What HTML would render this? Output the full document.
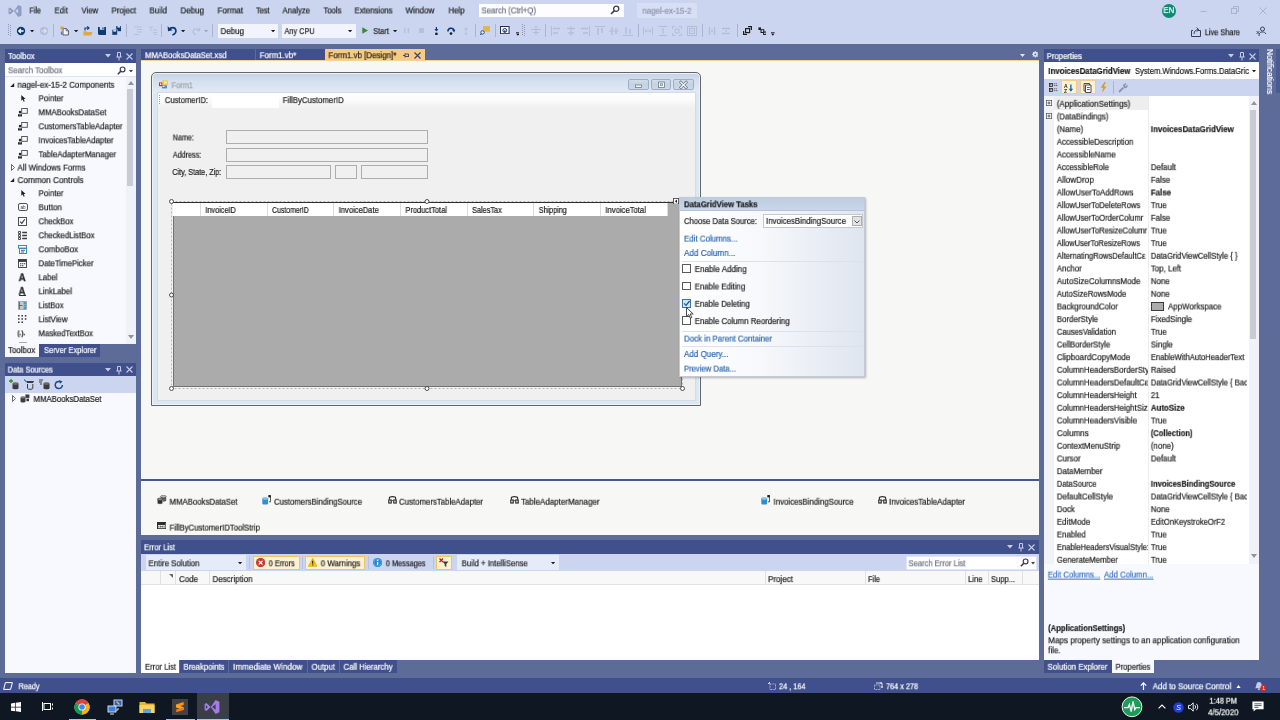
<!DOCTYPE html>
<html lang="en"><head><meta charset="utf-8"><title>nagel-ex-15-2 - Microsoft Visual Studio</title>
<style>
html,body{margin:0;padding:0;}
body{width:1280px;height:720px;overflow:hidden;position:relative;background:#5d6b99;font-family:"Liberation Sans",sans-serif;font-size:8.6px;color:#1e1e1e;}
.b{position:absolute;box-sizing:border-box;overflow:hidden;}
.t{position:absolute;white-space:nowrap;line-height:12px;height:12px;transform-origin:0 50%;will-change:transform;-webkit-text-stroke:0.22px;}
svg{overflow:visible;}
svg text{will-change:transform;}
</style></head><body>
<div class="b" style="left:0px;top:0px;width:1280px;height:44px;background:#ccd5f0;"></div>
<svg class="b" style="left:8px;top:4px;" width="14" height="14" viewBox="0 0 14 14"><path d="M0.5 4.5 L2 3.6 L6 7 L10.2 1 L13.5 2.5 V11.5 L10.2 13 L6 7 L2 10.4 L0.5 9.5 Z M10.2 4.6 L7.2 7 L10.2 9.4 Z M1.6 5.6 V8.4 L3.2 7 Z" fill="#8e9cc2" fill-rule="evenodd"/></svg>
<span class="t" style="left:29px;top:4px;transform:translate(0.50px,0.40px) scaleX(0.823);">File</span>
<span class="t" style="left:54px;top:4px;transform:translate(0.50px,0.40px) scaleX(0.905);">Edit</span>
<span class="t" style="left:81px;top:4px;transform:translate(0.50px,0.40px) scaleX(0.898);">View</span>
<span class="t" style="left:111px;top:4px;transform:translate(0.50px,0.40px) scaleX(0.920);">Project</span>
<span class="t" style="left:149px;top:4px;transform:translate(0.50px,0.40px) scaleX(0.916);">Build</span>
<span class="t" style="left:180px;top:4px;transform:translate(0.50px,0.40px) scaleX(0.928);">Debug</span>
<span class="t" style="left:217px;top:4px;transform:translate(0.50px,0.40px) scaleX(0.937);">Format</span>
<span class="t" style="left:256px;top:4px;transform:translate(0.00px,0.40px) scaleX(0.856);">Test</span>
<span class="t" style="left:282px;top:4px;transform:translate(0.50px,0.40px) scaleX(0.899);">Analyze</span>
<span class="t" style="left:323px;top:4px;transform:translate(0.50px,0.40px) scaleX(0.897);">Tools</span>
<span class="t" style="left:354px;top:4px;transform:translate(0.50px,0.40px) scaleX(0.904);">Extensions</span>
<span class="t" style="left:405px;top:4px;transform:translate(0.50px,0.40px) scaleX(0.948);">Window</span>
<span class="t" style="left:448px;top:4px;transform:translate(0.50px,0.40px) scaleX(0.905);">Help</span>
<div class="b" style="left:478.8px;top:3.8px;width:145.6px;height:13.4px;background:#fdfdff;"></div>
<span class="t" style="left:481px;top:4px;color:#6a6f80;transform:translate(0.50px,0.40px) scaleX(0.902);">Search (Ctrl+Q)</span>
<svg class="b" style="left:610px;top:5px;" width="10" height="10" viewBox="0 0 10 10"><circle cx="6.2" cy="3.8" r="2.6" fill="none" stroke="#3a3f55" stroke-width="1.3"/><path d="M4.4 5.6 L1 9" stroke="#3a3f55" stroke-width="1.6"/></svg>
<div class="b" style="left:637px;top:3.3px;width:60.3px;height:14.7px;background:#d8dff4;"></div>
<span class="t" style="left:642px;top:4px;color:#8b93b0;transform:translate(0.40px,0.70px) scaleX(0.924);">nagel-ex-15-2</span>
<div class="b" style="left:1161.8px;top:3.7px;width:14px;height:14px;border-radius:7px;background:#0f8a72;"></div>
<span class="t" style="left:1163px;top:5px;color:#ffffff;font-size:8.2px;transform:translate(0.40px,0.10px) scaleX(0.949);">EN</span>
<svg class="b" style="left:1195px;top:1px;" width="85" height="20" viewBox="0 0 85 20"><path d="M5.5 10.5 H11.5" stroke="#aab3cf" stroke-width="1"/><rect x="36.5" y="7.5" width="5" height="5" fill="none" stroke="#aab3cf"/><path d="M38.5 7.5 V5.5 H43.5 V10.5 H41.5" fill="none" stroke="#aab3cf"/><path d="M64.5 6.5 L71.5 13.5 M71.5 6.5 L64.5 13.5" stroke="#aab3cf" stroke-width="1"/></svg>
<svg class="b" style="left:8px;top:24px;" width="3" height="12" viewBox="0 0 3 12"><rect x="0" y="0" width="1" height="1" fill="#8e98b8"/><rect x="2" y="1" width="1" height="1" fill="#8e98b8"/><rect x="0" y="2" width="1" height="1" fill="#8e98b8"/><rect x="2" y="3" width="1" height="1" fill="#8e98b8"/><rect x="0" y="4" width="1" height="1" fill="#8e98b8"/><rect x="2" y="5" width="1" height="1" fill="#8e98b8"/><rect x="0" y="6" width="1" height="1" fill="#8e98b8"/><rect x="2" y="7" width="1" height="1" fill="#8e98b8"/><rect x="0" y="8" width="1" height="1" fill="#8e98b8"/><rect x="2" y="9" width="1" height="1" fill="#8e98b8"/><rect x="0" y="10" width="1" height="1" fill="#8e98b8"/><rect x="2" y="11" width="1" height="1" fill="#8e98b8"/></svg>
<svg class="b" style="left:16px;top:26px;" width="10" height="10" viewBox="0 0 10 10"><circle cx="5" cy="5" r="4.2" fill="#0e3a73"/><path d="M7.6 5 H3 M4.9 2.9 L2.8 5 L4.9 7.1" stroke="#fff" stroke-width="1.3" fill="none"/></svg>
<svg class="b" style="left:30.4px;top:29.6px;" width="4.2" height="2.4" viewBox="0 0 4.2 2.4"><path d="M0 0 H4.2 L2.1 2.4 Z" fill="#1e1e1e"/></svg>
<svg class="b" style="left:39px;top:26px;" width="10" height="10" viewBox="0 0 10 10"><circle cx="5" cy="5" r="4.2" fill="#b5bdd6"/><path d="M2.4 5 H7 M5.1 2.9 L7.2 5 L5.1 7.1" stroke="#dfe4f4" stroke-width="1.2" fill="none"/></svg>
<div class="b" style="left:53px;top:24px;width:1px;height:13px;background:#a9b3d3;"></div>
<svg class="b" style="left:60px;top:26px;" width="9" height="9.5" viewBox="0 0 9 9.5"><path d="M3 2.6 H6.4 L8.4 4.6 V9 H3 Z" fill="#f4f6fc" stroke="#4a4e60" stroke-width="0.9"/><path d="M6.2 2.6 V4.8 H8.4" fill="none" stroke="#4a4e60" stroke-width="0.8"/><path d="M1.9 0 V3.8 M0 1.9 H3.8 M0.6 0.6 L3.2 3.2 M3.2 0.6 L0.6 3.2" stroke="#d8a21e" stroke-width="0.8"/><path d="M1.4 5.6 V8.2 H2.6" stroke="#4a4e60" stroke-width="0.8" fill="none"/></svg>
<svg class="b" style="left:74.4px;top:29.6px;" width="4.2" height="2.4" viewBox="0 0 4.2 2.4"><path d="M0 0 H4.2 L2.1 2.4 Z" fill="#1e1e1e"/></svg>
<svg class="b" style="left:82.5px;top:26px;" width="10" height="10" viewBox="0 0 10 10"><path d="M0.4 5.2 H3.2 L4 6 H9.4 L8.2 9.6 H0.4 Z" fill="#e0a93f"/><path d="M2 4.6 V2 H5.6 M4.2 0.4 L6 2 L4.2 3.6" stroke="#14407f" stroke-width="1.2" fill="none"/></svg>
<svg class="b" style="left:98px;top:26.8px;" width="8" height="8" viewBox="0 0 8 8"><path d="M0 0 H8 V8 H1 L0 7 Z" fill="#0e3a73"/><rect x="1.8" y="0" width="4.4" height="2.8" fill="#ccd5f0"/><rect x="4.4" y="0.4" width="1.1" height="1.9" fill="#0e3a73"/></svg>
<svg class="b" style="left:112px;top:26px;" width="9.4" height="9.2" viewBox="0 0 9.4 9.2"><path d="M4.2 0 H9.4 V5.2 H4.2 Z" fill="#0e3a73"/><rect x="5.4" y="0" width="2.8" height="1.6" fill="#ccd5f0"/><path d="M0 3.8 H5.4 V9.2 H0.8 L0 8.4 Z" fill="#0e3a73" stroke="#ccd5f0" stroke-width="0.6"/><rect x="1.3" y="4" width="2.8" height="1.7" fill="#ccd5f0"/></svg>
<div class="b" style="left:126px;top:24px;width:1px;height:13px;background:#a9b3d3;"></div>
<svg class="b" style="left:133px;top:26px;" width="10" height="9" viewBox="0 0 10 9"><path d="M1 1 H9 M4 3.5 H9 M4 6 H9 M1 8.5 H6" stroke="#b7bfd9" stroke-width="1"/></svg>
<svg class="b" style="left:148px;top:26px;" width="10" height="9" viewBox="0 0 10 9"><path d="M1 1 H5 M3 1 V5 M5 4 H9 M5 6.5 H9 M6 8.5 H9" stroke="#b7bfd9" stroke-width="1"/></svg>
<div class="b" style="left:161px;top:24px;width:1px;height:13px;background:#a9b3d3;"></div>
<svg class="b" style="left:167px;top:25px;" width="11" height="11" viewBox="0 0 11 11"><path d="M2.2 4.6 C4 2 8 2 8.8 5 C9.3 7.4 7.6 9.2 5.4 10" stroke="#0e3a73" stroke-width="1.7" fill="none"/><path d="M0.6 1.2 L1 6.2 L5.6 5.2 Z" fill="#0e3a73"/></svg>
<svg class="b" style="left:181.4px;top:29.6px;" width="4.2" height="2.4" viewBox="0 0 4.2 2.4"><path d="M0 0 H4.2 L2.1 2.4 Z" fill="#1e1e1e"/></svg>
<svg class="b" style="left:191px;top:26px;" width="10" height="10" viewBox="0 0 10 10"><path d="M8 4.2 C6.4 2 3 2 2.2 4.6 C1.8 6.6 3.2 8.2 5 8.8" stroke="#b7bfd9" stroke-width="1.4" fill="none"/><path d="M9.4 1.2 L9 5.6 L5 4.8 Z" fill="#b7bfd9"/></svg>
<svg class="b" style="left:204.4px;top:29.6px;" width="4.2" height="2.4" viewBox="0 0 4.2 2.4"><path d="M0 0 H4.2 L2.1 2.4 Z" fill="#9aa3c0"/></svg>
<div class="b" style="left:212px;top:24px;width:1px;height:13px;background:#a9b3d3;"></div>
<div class="b" style="left:218px;top:24.3px;width:59.5px;height:13.4px;background:#f1f4fc;"></div>
<span class="t" style="left:220px;top:25px;transform:translate(0.50px,0.10px) scaleX(0.928);">Debug</span>
<svg class="b" style="left:271.4px;top:29.6px;" width="4.2" height="2.4" viewBox="0 0 4.2 2.4"><path d="M0 0 H4.2 L2.1 2.4 Z" fill="#1e1e1e"/></svg>
<div class="b" style="left:282px;top:24.3px;width:73.5px;height:13.4px;background:#f1f4fc;"></div>
<span class="t" style="left:284px;top:25px;transform:translate(0.50px,0.10px) scaleX(0.849);">Any CPU</span>
<svg class="b" style="left:348.4px;top:29.6px;" width="4.2" height="2.4" viewBox="0 0 4.2 2.4"><path d="M0 0 H4.2 L2.1 2.4 Z" fill="#1e1e1e"/></svg>
<svg class="b" style="left:362.2px;top:27.2px;" width="6.2" height="7" viewBox="0 0 6.2 7"><path d="M0.3 0.2 L6 3.5 L0.3 6.8 Z" fill="#388a34"/></svg>
<span class="t" style="left:373px;top:25px;transform:translate(0.30px,0.10px) scaleX(0.854);">Start</span>
<svg class="b" style="left:393.4px;top:30px;" width="4.2" height="2.4" viewBox="0 0 4.2 2.4"><path d="M0 0 H4.2 L2.1 2.4 Z" fill="#1e1e1e"/></svg>
<svg class="b" style="left:404px;top:27.7px;" width="6" height="5.8" viewBox="0 0 6 5.8"><path d="M0.8 0 V5.8 M4.4 0 V5.8" stroke="#b7bfd9" stroke-width="1.4"/></svg>
<div class="b" style="left:418.6px;top:27.9px;width:5.6px;height:5.4px;background:#b7bfd9;"></div>
<svg class="b" style="left:433px;top:26.6px;" width="7" height="8.4" viewBox="0 0 7 8.4"><path d="M3.4 0 V3" stroke="#0e3a73" stroke-width="1.2"/><path d="M1.4 2 L3.4 4.4 L5.4 2 Z" fill="#0e3a73"/><circle cx="3.4" cy="6.9" r="1.35" fill="#1e1e1e"/></svg>
<svg class="b" style="left:446.5px;top:27px;" width="8.4" height="8" viewBox="0 0 8.4 8"><path d="M0.9 4.4 C0.9 0.6 6.4 0.4 6.9 3.4" stroke="#0e3a73" stroke-width="1.5" fill="none"/><path d="M4.8 2.6 L8.2 2.8 L7.2 5.6 Z" fill="#0e3a73"/><circle cx="4" cy="6.6" r="1.35" fill="#1e1e1e"/></svg>
<svg class="b" style="left:462.5px;top:26.8px;" width="6" height="8.2" viewBox="0 0 6 8.2"><path d="M3 1.6 V4.8" stroke="#b7bfd9" stroke-width="1.2"/><path d="M1 2.6 L3 0.2 L5 2.6 Z" fill="#b7bfd9"/><circle cx="3" cy="6.8" r="1.25" fill="#b7bfd9"/></svg>
<div class="b" style="left:475px;top:24px;width:1px;height:13px;background:#a9b3d3;"></div>
<svg class="b" style="left:480.3px;top:26px;" width="10.2" height="9" viewBox="0 0 10.2 9"><rect x="3" y="0" width="7.2" height="5.6" fill="#e6b355"/><circle cx="2.6" cy="6.4" r="1.7" fill="#e8edfa" stroke="#1a4b8c" stroke-width="0.9"/><path d="M1.5 7.6 L0.3 8.8" stroke="#1a4b8c" stroke-width="1.1"/></svg>
<div class="b" style="left:495px;top:24px;width:1px;height:13px;background:#a9b3d3;"></div>
<svg class="b" style="left:500.4px;top:26.3px;" width="9.6" height="8.2" viewBox="0 0 9.6 8.2"><rect x="0.5" y="0.5" width="8.6" height="7.2" fill="#f3f5fc" stroke="#2a2e40" stroke-width="1"/><circle cx="4.8" cy="4.4" r="1.9" fill="none" stroke="#0e3a73" stroke-width="1"/><rect x="4.1" y="4.4" width="1.4" height="1.9" fill="#0e3a73"/></svg>
<svg class="b" style="left:515.5px;top:32.4px;" width="3.6" height="3.8" viewBox="0 0 3.6 3.8"><path d="M0 0.4 H3.6" stroke="#1e1e1e" stroke-width="0.8"/><path d="M0 1.6 H3.6 L1.8 3.8 Z" fill="#1e1e1e"/></svg>
<svg class="b" style="left:522px;top:24px;" width="3" height="12" viewBox="0 0 3 12"><rect x="0" y="0" width="1" height="1" fill="#8e98b8"/><rect x="2" y="1" width="1" height="1" fill="#8e98b8"/><rect x="0" y="2" width="1" height="1" fill="#8e98b8"/><rect x="2" y="3" width="1" height="1" fill="#8e98b8"/><rect x="0" y="4" width="1" height="1" fill="#8e98b8"/><rect x="2" y="5" width="1" height="1" fill="#8e98b8"/><rect x="0" y="6" width="1" height="1" fill="#8e98b8"/><rect x="2" y="7" width="1" height="1" fill="#8e98b8"/><rect x="0" y="8" width="1" height="1" fill="#8e98b8"/><rect x="2" y="9" width="1" height="1" fill="#8e98b8"/><rect x="0" y="10" width="1" height="1" fill="#8e98b8"/><rect x="2" y="11" width="1" height="1" fill="#8e98b8"/></svg>
<svg class="b" style="left:531px;top:26px;" width="10" height="10" viewBox="0 0 10 10"><path d="M0 3.5 H10 M5 0 V9 M2 6.5 H8" stroke="#b4bcd6" stroke-width="1.2" fill="none"/></svg>
<div class="b" style="left:545px;top:24px;width:1px;height:13px;background:#a9b3d3;"></div>
<svg class="b" style="left:551px;top:26px;" width="10" height="10" viewBox="0 0 10 10"><path d="M0.5 0 V10" stroke="#b4bcd6"/><path d="M2 2.5 H9 M2 7 H7" stroke="#b4bcd6" stroke-width="1.4"/></svg>
<svg class="b" style="left:566px;top:26px;" width="10" height="10" viewBox="0 0 10 10"><path d="M5 0 V10" stroke="#b4bcd6"/><path d="M1 2.5 H9 M2 7 H8" stroke="#b4bcd6" stroke-width="1.4"/></svg>
<svg class="b" style="left:580px;top:26px;" width="10" height="10" viewBox="0 0 10 10"><path d="M9.5 0 V10" stroke="#b4bcd6"/><path d="M1 2.5 H8 M3 7 H8" stroke="#b4bcd6" stroke-width="1.4"/></svg>
<svg class="b" style="left:595px;top:26px;" width="10" height="10" viewBox="0 0 10 10"><path d="M0 0.5 H10" stroke="#b4bcd6"/><path d="M3 2 V9 M7 2 V7" stroke="#b4bcd6" stroke-width="1.4"/></svg>
<svg class="b" style="left:609px;top:26px;" width="10" height="10" viewBox="0 0 10 10"><path d="M0 5 H10" stroke="#b4bcd6"/><path d="M3 1 V9 M7 2 V8" stroke="#b4bcd6" stroke-width="1.4"/></svg>
<svg class="b" style="left:623px;top:26px;" width="10" height="10" viewBox="0 0 10 10"><path d="M0 9.5 H10" stroke="#b4bcd6"/><path d="M3 1 V8 M7 3 V8" stroke="#b4bcd6" stroke-width="1.4"/></svg>
<div class="b" style="left:638px;top:24px;width:1px;height:13px;background:#a9b3d3;"></div>
<svg class="b" style="left:643px;top:26px;" width="10" height="10" viewBox="0 0 10 10"><path d="M0.5 1 V9 M9.5 1 V9 M2 5 H8 M3.5 3.5 L2 5 L3.5 6.5 M6.5 3.5 L8 5 L6.5 6.5" stroke="#b4bcd6" fill="none"/></svg>
<svg class="b" style="left:658px;top:26px;" width="10" height="10" viewBox="0 0 10 10"><path d="M1 0.5 H9 M1 9.5 H9 M5 2 V8" stroke="#b4bcd6" stroke-width="1.2" fill="none"/></svg>
<svg class="b" style="left:672px;top:26px;" width="10" height="10" viewBox="0 0 10 10"><path d="M0.5 3 V0.5 H3 M7 0.5 H9.5 V3 M9.5 7 V9.5 H7 M3 9.5 H0.5 V7 M3 3 H7 V7 H3 Z" stroke="#b4bcd6" fill="none"/></svg>
<svg class="b" style="left:687px;top:26px;" width="10" height="10" viewBox="0 0 10 10"><rect x="0.5" y="0.5" width="9" height="9" fill="none" stroke="#b4bcd6"/><rect x="2.5" y="2.5" width="5" height="5" fill="none" stroke="#b4bcd6"/><path d="M4 5 H6" stroke="#b4bcd6"/></svg>
<div class="b" style="left:702px;top:24px;width:1px;height:13px;background:#a9b3d3;"></div>
<svg class="b" style="left:707px;top:26px;" width="10" height="10" viewBox="0 0 10 10"><path d="M2.5 1 V9 M7.5 1 V9 M4 5 H6" stroke="#b4bcd6" stroke-width="1.3"/></svg>
<svg class="b" style="left:721px;top:26px;" width="10" height="10" viewBox="0 0 10 10"><path d="M1 2.5 H9 M1 7.5 H9 M5 4 V6" stroke="#b4bcd6" stroke-width="1.3"/></svg>
<div class="b" style="left:736.6px;top:24px;width:1px;height:13px;background:#a9b3d3;"></div>
<svg class="b" style="left:743px;top:26.2px;" width="9" height="9" viewBox="0 0 9 9"><rect x="2.6" y="2.6" width="4" height="4" fill="#ccd5f0" stroke="#1e1e1e" stroke-width="1.2"/><path d="M0.6 5 V8.4 H4 M5 0.6 H8.4 V4" stroke="#1e1e1e" stroke-width="1.2" fill="none"/></svg>
<svg class="b" style="left:757.8px;top:27px;" width="8.6" height="8" viewBox="0 0 8.6 8"><rect x="0.4" y="0.4" width="2.6" height="2.6" fill="#1e1e1e"/><rect x="3" y="2.7" width="2.8" height="2.8" fill="none" stroke="#1e1e1e" stroke-width="1"/><rect x="5.6" y="5" width="2.6" height="2.6" fill="none" stroke="#1e1e1e" stroke-width="1"/></svg>
<svg class="b" style="left:771.2px;top:32.4px;" width="3.6" height="3.8" viewBox="0 0 3.6 3.8"><path d="M0 0.4 H3.6" stroke="#1e1e1e" stroke-width="0.8"/><path d="M0 1.6 H3.6 L1.8 3.8 Z" fill="#1e1e1e"/></svg>
<svg class="b" style="left:1190.6px;top:27.2px;" width="10" height="10" viewBox="0 0 10 10"><path d="M7 3.5 H9.5 V9.5 H0.5 V3.5 H2" stroke="#3a3f55" fill="none"/><path d="M3 7 C3 4 5 2.6 7.5 2.6 M5.6 0.6 L7.8 2.6 L5.6 4.6" stroke="#3a3f55" fill="none"/></svg>
<span class="t" style="left:1204px;top:26px;transform:translate(0.80px,0.30px) scaleX(0.852);">Live Share</span>
<svg class="b" style="left:1256px;top:25.6px;" width="11" height="11" viewBox="0 0 11 11"><circle cx="6.5" cy="3" r="2" fill="none" stroke="#3a3f55"/><path d="M3 10 C3 6.5 5 6 6.5 6 C8 6 9.5 6.5 9.8 8" stroke="#3a3f55" fill="none"/><path d="M0.5 5 L3.5 8 M3.5 5 L0.5 8" stroke="#3a3f55" stroke-width="0.9"/></svg>
<div class="b" style="left:4.5px;top:49px;width:131.2px;height:13.5px;background:#40508d;"></div>
<span class="t" style="left:7px;top:50px;color:#ffffff;transform:translate(0.90px,0.10px) scaleX(0.905);">Toolbox</span>
<svg class="b" style="left:104.7px;top:54px;" width="6" height="4" viewBox="0 0 6 4"><path d="M0 0 H6 L3 3.4 Z" fill="#c5cce3"/></svg>
<svg class="b" style="left:115.7px;top:52px;" width="6" height="9" viewBox="0 0 6 9"><path d="M1.5 0.5 H4.5 V5 M1.5 0.5 V5 M0.3 5 H5.7 M3 5 V8.5" stroke="#c5cce3" stroke-width="1" fill="none"/></svg>
<svg class="b" style="left:125.7px;top:52.5px;" width="7" height="7" viewBox="0 0 7 7"><path d="M0.5 0.5 L6.5 6.5 M6.5 0.5 L0.5 6.5" stroke="#c5cce3" stroke-width="1.1"/></svg>
<div class="b" style="left:4.5px;top:62.5px;width:131.2px;height:14px;background:#ffffff;border-bottom:1px solid #dde2f0;"></div>
<span class="t" style="left:8px;top:64px;color:#6d7284;transform:translate(0.00px,0.30px) scaleX(0.920);">Search Toolbox</span>
<svg class="b" style="left:117px;top:65.5px;" width="9" height="9" viewBox="0 0 9 9"><circle cx="5.6" cy="3.4" r="2.4" fill="none" stroke="#3a3f55" stroke-width="1.2"/><path d="M3.9 5.1 L0.8 8.2" stroke="#3a3f55" stroke-width="1.5"/></svg>
<svg class="b" style="left:129px;top:69.5px;" width="4" height="2.5" viewBox="0 0 4 2.5"><path d="M0 0 H4 L2 2.5 Z" fill="#3a3f55"/></svg>
<div class="b" style="left:4.5px;top:76.5px;width:131.2px;height:267px;background:#f7f9fe;"></div>
<div class="b" style="left:125.7px;top:77px;width:10px;height:266.5px;background:#f0f2f9;"></div>
<svg class="b" style="left:127.5px;top:81px;" width="6" height="4" viewBox="0 0 6 4"><path d="M0 4 L3 0 L6 4 Z" fill="#8f939e"/></svg>
<svg class="b" style="left:127.5px;top:335px;" width="6" height="4" viewBox="0 0 6 4"><path d="M0 0 L3 4 L6 0 Z" fill="#8f939e"/></svg>
<div class="b" style="left:127.4px;top:89px;width:5.8px;height:97px;background:#c9cbd4;"></div>
<svg class="b" style="left:10.4px;top:82.5px;" width="4.2" height="4.2" viewBox="0 0 4.2 4.2"><path d="M4.2 0 V4.2 H0 Z" fill="#1e1e1e"/></svg>
<span class="t" style="left:17px;top:78px;transform:translate(0.50px,0.80px) scaleX(0.931);">nagel-ex-15-2 Components</span>
<svg class="b" style="left:11px;top:163.8px;" width="4" height="7" viewBox="0 0 4 7"><path d="M0.5 0.5 L3.5 3.5 L0.5 6.5 Z" fill="none" stroke="#55596b" stroke-width="0.9"/></svg>
<span class="t" style="left:17px;top:161px;transform:translate(0.50px,0.60px) scaleX(0.925);">All Windows Forms</span>
<svg class="b" style="left:10.4px;top:177.8px;" width="4.2" height="4.2" viewBox="0 0 4.2 4.2"><path d="M4.2 0 V4.2 H0 Z" fill="#1e1e1e"/></svg>
<span class="t" style="left:17px;top:174px;transform:translate(0.50px,0.10px) scaleX(0.953);">Common Controls</span>
<svg class="b" style="left:20.5px;top:94.6px;" width="5.4" height="7" viewBox="0 0 5.4 7"><path d="M0.3 0 V5.7 L1.7 4.4 L2.7 6.8 L3.7 6.3 L2.7 4 L4.6 4 Z" fill="#1e1e1e"/></svg>
<span class="t" style="left:38px;top:92px;transform:translate(0.50px,0.30px) scaleX(0.920);">Pointer</span>
<svg class="b" style="left:18px;top:107.6px;" width="10" height="9" viewBox="0 0 10 9"><rect x="3.7" y="0.5" width="5.6" height="4.8" fill="none" stroke="#4a4a4a" stroke-width="0.9"/><circle cx="2" cy="3.9" r="1.25" fill="#2b2b2b"/><path d="M0 8.4 V6.6 C0 5.4 4 5.4 4 6.6 V8.4 Z" fill="#2b2b2b"/><path d="M1.2 6.2 L2 7.2 L2.8 6.2" stroke="#f7f9fe" stroke-width="0.5" fill="none"/></svg>
<span class="t" style="left:38px;top:106px;transform:translate(0.50px,0.30px) scaleX(0.907);">MMABooksDataSet</span>
<svg class="b" style="left:18px;top:121.6px;" width="10" height="9" viewBox="0 0 10 9"><rect x="3.7" y="0.5" width="5.6" height="4.8" fill="none" stroke="#4a4a4a" stroke-width="0.9"/><circle cx="2" cy="3.9" r="1.25" fill="#2b2b2b"/><path d="M0 8.4 V6.6 C0 5.4 4 5.4 4 6.6 V8.4 Z" fill="#2b2b2b"/><path d="M1.2 6.2 L2 7.2 L2.8 6.2" stroke="#f7f9fe" stroke-width="0.5" fill="none"/></svg>
<span class="t" style="left:38px;top:120px;transform:translate(0.50px,0.30px) scaleX(0.911);">CustomersTableAdapter</span>
<svg class="b" style="left:18px;top:135.6px;" width="10" height="9" viewBox="0 0 10 9"><rect x="3.7" y="0.5" width="5.6" height="4.8" fill="none" stroke="#4a4a4a" stroke-width="0.9"/><circle cx="2" cy="3.9" r="1.25" fill="#2b2b2b"/><path d="M0 8.4 V6.6 C0 5.4 4 5.4 4 6.6 V8.4 Z" fill="#2b2b2b"/><path d="M1.2 6.2 L2 7.2 L2.8 6.2" stroke="#f7f9fe" stroke-width="0.5" fill="none"/></svg>
<span class="t" style="left:38px;top:134px;transform:translate(0.50px,0.30px) scaleX(0.913);">InvoicesTableAdapter</span>
<svg class="b" style="left:18px;top:149.6px;" width="10" height="9" viewBox="0 0 10 9"><rect x="3.7" y="0.5" width="5.6" height="4.8" fill="none" stroke="#4a4a4a" stroke-width="0.9"/><circle cx="2" cy="3.9" r="1.25" fill="#2b2b2b"/><path d="M0 8.4 V6.6 C0 5.4 4 5.4 4 6.6 V8.4 Z" fill="#2b2b2b"/><path d="M1.2 6.2 L2 7.2 L2.8 6.2" stroke="#f7f9fe" stroke-width="0.5" fill="none"/></svg>
<span class="t" style="left:38px;top:148px;transform:translate(0.50px,0.30px) scaleX(0.916);">TableAdapterManager</span>
<svg class="b" style="left:20.5px;top:189.9px;" width="5.4" height="7" viewBox="0 0 5.4 7"><path d="M0.3 0 V5.7 L1.7 4.4 L2.7 6.8 L3.7 6.3 L2.7 4 L4.6 4 Z" fill="#1e1e1e"/></svg>
<span class="t" style="left:38px;top:187px;transform:translate(0.50px,0.20px) scaleX(0.920);">Pointer</span>
<span class="t" style="left:38px;top:201px;transform:translate(0.50px,0.30px) scaleX(0.945);">Button</span>
<span class="t" style="left:38px;top:215px;transform:translate(0.50px,0.30px) scaleX(0.893);">CheckBox</span>
<span class="t" style="left:38px;top:229px;transform:translate(0.50px,0.30px) scaleX(0.902);">CheckedListBox</span>
<span class="t" style="left:38px;top:243px;transform:translate(0.50px,0.30px) scaleX(0.929);">ComboBox</span>
<span class="t" style="left:38px;top:257px;transform:translate(0.50px,0.30px) scaleX(0.904);">DateTimePicker</span>
<span class="t" style="left:38px;top:271px;transform:translate(0.50px,0.30px) scaleX(0.903);">Label</span>
<span class="t" style="left:38px;top:285px;transform:translate(0.50px,0.30px) scaleX(0.910);">LinkLabel</span>
<span class="t" style="left:38px;top:299px;transform:translate(0.50px,0.30px) scaleX(0.887);">ListBox</span>
<span class="t" style="left:38px;top:313px;transform:translate(0.50px,0.30px) scaleX(0.910);">ListView</span>
<span class="t" style="left:38px;top:327px;transform:translate(0.50px,0.30px) scaleX(0.898);">MaskedTextBox</span>
<svg class="b" style="left:18px;top:203px;" width="10" height="8" viewBox="0 0 10 8"><rect x="0.5" y="0.5" width="9" height="7" rx="1.6" fill="none" stroke="#3c3c3c" stroke-width="0.9"/><text x="5" y="5.9" font-size="4.6" font-family="Liberation Sans, sans-serif" text-anchor="middle" fill="#3c3c3c">ab</text></svg>
<svg class="b" style="left:18px;top:216.5px;" width="9" height="9" viewBox="0 0 9 9"><rect x="0.5" y="0.5" width="8" height="8" fill="none" stroke="#3c3c3c" stroke-width="0.9"/><path d="M2.2 4.6 L3.8 6.4 L6.8 2.2" stroke="#3c3c3c" stroke-width="1.1" fill="none"/></svg>
<svg class="b" style="left:18px;top:230.5px;" width="9" height="9" viewBox="0 0 9 9"><path d="M0.5 0.5 H2.5 V2.5 H0.5 Z M0.5 3.5 H2.5 V5.5 H0.5 Z M0.5 6.5 H2.5 V8.5 H0.5 Z" fill="none" stroke="#3c3c3c" stroke-width="0.9"/><path d="M4.2 1.5 H9 M4.2 4.5 H9 M4.2 7.5 H9" stroke="#3c3c3c" stroke-width="1.3"/></svg>
<svg class="b" style="left:18px;top:244.5px;" width="9" height="9" viewBox="0 0 9 9"><rect x="0.5" y="0.5" width="8" height="2.6" fill="#f7f9fe" stroke="#2f7fb5" stroke-width="0.9"/><rect x="1.5" y="3.5" width="7" height="5" fill="#f7f9fe" stroke="#2f7fb5" stroke-width="0.9"/><path d="M3 5.3 H7 M3 7 H6" stroke="#3c3c3c" stroke-width="0.8"/></svg>
<svg class="b" style="left:18px;top:258.5px;" width="9" height="9" viewBox="0 0 9 9"><rect x="0.5" y="0.5" width="8" height="8" fill="#f7f9fe" stroke="#3c3c3c" stroke-width="0.9"/><rect x="0.5" y="0.5" width="8" height="2.4" fill="#3c3c3c"/><path d="M2 4.8 H3.4 M4 4.8 H5.4 M6 4.8 H7.4 M2 6.8 H3.4 M4 6.8 H5.4" stroke="#3c3c3c" stroke-width="1.1"/></svg>
<span class="t" style="left:18px;top:271px;color:#2b2b2b;font-weight:bold;font-size:11px;transform:translate(0.50px,0.30px) scaleX(0.920);">A</span>
<span class="t" style="left:18px;top:284px;color:#2b2b2b;font-weight:bold;font-size:10.5px;transform:translate(0.50px,0.80px) scaleX(0.920);">A</span>
<div class="b" style="left:19px;top:295.2px;width:7px;height:1px;background:#2b2b2b;"></div>
<svg class="b" style="left:18px;top:300.5px;" width="9" height="9" viewBox="0 0 9 9"><rect x="0.4" y="0.4" width="8.2" height="8.2" fill="#c9c9c9" stroke="#8a8a8a" stroke-width="0.6"/><rect x="5.6" y="0.8" width="2.6" height="2.2" fill="#3aa0d8"/><rect x="5.6" y="3.4" width="2.6" height="2.2" fill="#3aa0d8"/><rect x="5.6" y="6" width="2.6" height="2.2" fill="#3aa0d8"/><path d="M1.4 1 V8 M1.4 4.5 H4.4" stroke="#4a4a4a" stroke-width="0.8"/></svg>
<div class="b" style="left:18.5px;top:342.4px;width:8.5px;height:1px;background:#a9abb2;"></div>
<svg class="b" style="left:18px;top:315px;" width="9" height="8" viewBox="0 0 9 8"><path d="M0 0.8 H1.6 M3.4 0.8 H5 M6.8 0.8 H8.4 M0 4 H1.6 M3.4 4 H5 M6.8 4 H8.4 M0 7.2 H1.6 M3.4 7.2 H5" stroke="#3c3c3c" stroke-width="1.5"/></svg>
<span class="t" style="left:17px;top:327px;color:#2b2b2b;font-weight:bold;font-size:7px;transform:translate(0.50px,0.30px) scaleX(0.920);">(.).</span>
<div class="b" style="left:4.5px;top:343.5px;width:34px;height:13px;background:#f7f9fe;"></div>
<span class="t" style="left:8px;top:344px;transform:translate(0.00px,0.10px) scaleX(0.920);">Toolbox</span>
<div class="b" style="left:39px;top:343.5px;width:60.5px;height:13px;background:#40508d;"></div>
<span class="t" style="left:44px;top:344px;color:#ffffff;transform:translate(0.00px,0.10px) scaleX(0.879);">Server Explorer</span>
<div class="b" style="left:4.5px;top:362.5px;width:131.2px;height:13.5px;background:#40508d;"></div>
<span class="t" style="left:7px;top:363px;color:#ffffff;transform:translate(0.70px,0.60px) scaleX(0.864);">Data Sources</span>
<svg class="b" style="left:104.7px;top:367.5px;" width="6" height="4" viewBox="0 0 6 4"><path d="M0 0 H6 L3 3.4 Z" fill="#c5cce3"/></svg>
<svg class="b" style="left:115.7px;top:365.5px;" width="6" height="9" viewBox="0 0 6 9"><path d="M1.5 0.5 H4.5 V5 M1.5 0.5 V5 M0.3 5 H5.7 M3 5 V8.5" stroke="#c5cce3" stroke-width="1" fill="none"/></svg>
<svg class="b" style="left:125.7px;top:366px;" width="7" height="7" viewBox="0 0 7 7"><path d="M0.5 0.5 L6.5 6.5 M6.5 0.5 L0.5 6.5" stroke="#c5cce3" stroke-width="1.1"/></svg>
<div class="b" style="left:4.5px;top:376px;width:131.2px;height:16.5px;background:#ccd5f0;"></div>
<svg class="b" style="left:9px;top:379px;" width="11" height="11" viewBox="0 0 11 11"><path d="M3.5 4.6 V9.2 C3.5 10.6 9.5 10.6 9.5 9.2 V4.6" fill="#3c3c3c"/><ellipse cx="6.5" cy="4.6" rx="3" ry="1.3" fill="#6a6a6a"/><path d="M2 0 V4 M0 2 H4" stroke="#2e8b2e" stroke-width="1.3"/></svg>
<svg class="b" style="left:24px;top:379px;" width="11" height="11" viewBox="0 0 11 11"><path d="M2 2 H10 L9 4 H3 Z" fill="#3c3c3c"/><path d="M3.5 5 V9.4 C3.5 10.6 8.8 10.6 8.8 9.4 V5" fill="none" stroke="#3c3c3c"/><path d="M0 0.5 L2.4 2.8" stroke="#2f7fb5" stroke-width="1.2"/></svg>
<svg class="b" style="left:39px;top:379px;" width="11" height="11" viewBox="0 0 11 11"><path d="M4.5 4.6 V9.2 C4.5 10.6 10.5 10.6 10.5 9.2 V4.6" fill="#3c3c3c"/><ellipse cx="7.5" cy="4.6" rx="3" ry="1.3" fill="#6a6a6a"/><path d="M0 1 H4 M0 3 H3 M1 5 H3" stroke="#3c3c3c" stroke-width="1"/></svg>
<svg class="b" style="left:54px;top:379.5px;" width="10" height="10" viewBox="0 0 10 10"><path d="M8.4 5 A3.6 3.6 0 1 1 6.2 1.7" fill="none" stroke="#1a4b8c" stroke-width="1.5"/><path d="M5 0 L8.6 1.4 L6 3.8 Z" fill="#1a4b8c"/></svg>
<div class="b" style="left:4.5px;top:392.5px;width:131.2px;height:280px;background:#f7f9fe;"></div>
<svg class="b" style="left:12px;top:395.2px;" width="4" height="7" viewBox="0 0 4 7"><path d="M0.5 0.5 L3.5 3.5 L0.5 6.5 Z" fill="none" stroke="#55596b" stroke-width="0.9"/></svg>
<svg class="b" style="left:19.5px;top:394px;" width="10" height="9" viewBox="0 0 10 9"><path d="M0.5 3.4 V7.4 C0.5 8.8 5.5 8.8 5.5 7.4 V3.4" fill="#3c3c3c"/><ellipse cx="3" cy="3.4" rx="2.5" ry="1.1" fill="#777"/><rect x="5.4" y="0.5" width="4" height="3.4" fill="#3c3c3c"/><rect x="6.4" y="4.6" width="2.6" height="2.6" fill="#3c3c3c"/></svg>
<span class="t" style="left:33px;top:393px;transform:translate(0.50px,0.00px) scaleX(0.907);">MMABooksDataSet</span>
<div class="b" style="left:141px;top:49px;width:113.5px;height:11.3px;background:#40508d;"></div>
<span class="t" style="left:145px;top:49px;color:#ffffff;transform:translate(0.00px,0.20px) scaleX(0.898);">MMABooksDataSet.xsd</span>
<div class="b" style="left:256px;top:49px;width:68.6px;height:11.3px;background:#40508d;"></div>
<span class="t" style="left:259px;top:49px;color:#ffffff;transform:translate(0.70px,0.20px) scaleX(0.921);">Form1.vb*</span>
<div class="b" style="left:324.6px;top:49px;width:100.2px;height:12px;background:#f5cc84;"></div>
<span class="t" style="left:328px;top:49px;transform:translate(0.40px,0.20px) scaleX(0.924);">Form1.vb [Design]*</span>
<svg class="b" style="left:403px;top:52.5px;" width="6" height="5" viewBox="0 0 6 5"><path d="M0 2.5 H2 M2 0.5 V4.5 M2 1 H5.5 M2 3.5 H5.5 M5.5 1 V4" stroke="#3a3f55" stroke-width="0.9" fill="none"/></svg>
<svg class="b" style="left:414px;top:51.5px;" width="7" height="7" viewBox="0 0 7 7"><path d="M0.5 0.5 L6.5 6.5 M6.5 0.5 L0.5 6.5" stroke="#3a3f55" stroke-width="1.1"/></svg>
<svg class="b" style="left:1020px;top:53.8px;" width="5" height="3" viewBox="0 0 5 3"><path d="M0 0 H5 L2.5 3 Z" fill="#e3e7f4"/></svg>
<svg class="b" style="left:1031.6px;top:51.2px;" width="6.6" height="6.6" viewBox="0 0 6.6 6.6"><circle cx="3.3" cy="3.3" r="1.9" fill="none" stroke="#e3e7f4" stroke-width="1.3"/><path d="M3.3 0 V6.6 M0 3.3 H6.6 M1 1 L5.6 5.6 M5.6 1 L1 5.6" stroke="#e3e7f4" stroke-width="0.9"/><circle cx="3.3" cy="3.3" r="0.9" fill="#5d6b99"/></svg>
<div class="b" style="left:141px;top:60px;width:898px;height:419px;background:#f7f7f6;"></div>
<div class="b" style="left:141px;top:60px;width:898px;height:1.2px;background:#f3d394;"></div>
<div class="b" style="left:141px;top:479px;width:898px;height:2px;background:#46568f;"></div>
<div class="b" style="left:141px;top:481px;width:898px;height:53.5px;background:#f7f7f6;"></div>
<div class="b" style="left:151.2px;top:72px;width:549.8px;height:333.6px;border:1px solid #62676f;border-radius:5px 5px 0 0;background:linear-gradient(180deg,#c3d3e6 0px,#d5e0ee 8px,#e2eaf4 20px,#dde7f2 21px,#dde7f2 100%);box-shadow:inset 0 0 0 1px #edf2f9;"></div>
<div class="b" style="left:157.3px;top:92.4px;width:538.3px;height:308.2px;background:#f0f0f0;border:1px solid #d3dbe6;"></div>
<svg class="b" style="left:158.8px;top:80.4px;" width="9.4" height="8.6" viewBox="0 0 9.4 8.6"><rect x="0" y="2.4" width="3.6" height="3.8" fill="#c23a2c"/><rect x="1" y="3.4" width="1.3" height="1.5" fill="#fff"/><rect x="3.4" y="0.2" width="5.6" height="5.2" rx="1" fill="#edc84c"/><circle cx="6.4" cy="2.4" r="1.6" fill="#f8e38e"/><rect x="3" y="5.4" width="5" height="3" fill="#4b8ad0"/><rect x="3.6" y="6" width="2" height="1" fill="#d4e6f8"/></svg>
<span class="t" style="left:171px;top:79px;color:#9aa0ab;transform:translate(0.50px,0.30px) scaleX(0.865);">Form1</span>
<div class="b" style="left:628px;top:78.7px;width:20.5px;height:11.8px;border:1px solid #9dafc6;border-radius:2px;background:linear-gradient(180deg,#d2dde9,#c4d2e2 50%,#ccd8e6);"></div>
<svg class="b" style="left:628px;top:79px;" width="20.5" height="11.5" viewBox="0 0 20.5 11.5"><rect x="7.5" y="6" width="6" height="2.4" fill="#f5f7fb" stroke="#6f7a8e" stroke-width="0.8"/></svg>
<div class="b" style="left:650.5px;top:78.7px;width:20.5px;height:11.8px;border:1px solid #9dafc6;border-radius:2px;background:linear-gradient(180deg,#d2dde9,#c4d2e2 50%,#ccd8e6);"></div>
<svg class="b" style="left:650.5px;top:79px;" width="20.5" height="11.5" viewBox="0 0 20.5 11.5"><rect x="7.5" y="3" width="6" height="5.4" fill="#f5f7fb" stroke="#6f7a8e" stroke-width="0.8"/><rect x="9.3" y="4.8" width="2.4" height="1.8" fill="#cfd9e8" stroke="#6f7a8e" stroke-width="0.6"/></svg>
<div class="b" style="left:673px;top:78.7px;width:21px;height:11.8px;border:1px solid #9dafc6;border-radius:2px;background:linear-gradient(180deg,#d2dde9,#c4d2e2 50%,#ccd8e6);"></div>
<svg class="b" style="left:673px;top:79px;" width="21" height="11.5" viewBox="0 0 21 11.5"><path d="M7.8 3.2 L13.2 8.6 M13.2 3.2 L7.8 8.6" stroke="#6a7386" stroke-width="2.6" stroke-linecap="square"/><path d="M7.8 3.2 L13.2 8.6 M13.2 3.2 L7.8 8.6" stroke="#fbfcfe" stroke-width="1.2" stroke-linecap="square"/></svg>
<div class="b" style="left:158.3px;top:93px;width:536.3px;height:15px;background:linear-gradient(180deg,#ffffff,#fafafa 50%,#f0f0f0);"></div>
<svg class="b" style="left:158.8px;top:95px;" width="1" height="10" viewBox="0 0 1 10"><path d="M0.5 0 V10" stroke="#9a9a9a" stroke-width="1" stroke-dasharray="1 1"/></svg>
<span class="t" style="left:164px;top:94px;transform:translate(0.80px,0.10px) scaleX(0.896);">CustomerID:</span>
<div class="b" style="left:211.6px;top:93.4px;width:67px;height:14.6px;background:#ffffff;"></div>
<span class="t" style="left:282px;top:94px;transform:translate(0.70px,0.10px) scaleX(0.912);">FillByCustomerID</span>
<span class="t" style="left:172px;top:132px;font-size:8.2px;transform:translate(0.80px,0.40px) scaleX(0.870);">Name:</span>
<span class="t" style="left:172px;top:149px;font-size:8.2px;transform:translate(0.80px,0.70px) scaleX(0.882);">Address:</span>
<span class="t" style="left:172px;top:167px;font-size:8.2px;transform:translate(0.30px,0.00px) scaleX(0.885);">City, State, Zip:</span>
<div class="b" style="left:226.4px;top:130.3px;width:201.6px;height:13.5px;background:#f0f0f0;border:1px solid #adadad;"></div>
<div class="b" style="left:226.4px;top:148px;width:201.6px;height:13.5px;background:#f0f0f0;border:1px solid #adadad;"></div>
<div class="b" style="left:226.4px;top:165.2px;width:105.1px;height:13.5px;background:#f0f0f0;border:1px solid #adadad;"></div>
<div class="b" style="left:335.3px;top:165.2px;width:22.2px;height:13.5px;background:#f0f0f0;border:1px solid #adadad;"></div>
<div class="b" style="left:361px;top:165.2px;width:67px;height:13.5px;background:#f0f0f0;border:1px solid #adadad;"></div>
<div class="b" style="left:172.5px;top:201.8px;width:509.3px;height:185.6px;background:#ababab;border:1px solid #747474;border-top-color:#2e2e2e;"></div>
<div class="b" style="left:173.3px;top:202.7px;width:494.5px;height:13.4px;background:#ffffff;"></div>
<div class="b" style="left:200px;top:203px;width:1px;height:13px;background:#dcdcdc;"></div>
<span class="t" style="left:205px;top:205px;font-size:8.2px;transform:translate(0.40px,0.00px) scaleX(0.888);">InvoiceID</span>
<div class="b" style="left:266.667px;top:203px;width:1px;height:13px;background:#dcdcdc;"></div>
<span class="t" style="left:272px;top:205px;font-size:8.2px;transform:translate(0.07px,0.00px) scaleX(0.840);">CustomerID</span>
<div class="b" style="left:333.334px;top:203px;width:1px;height:13px;background:#dcdcdc;"></div>
<span class="t" style="left:338px;top:205px;font-size:8.2px;transform:translate(0.73px,0.00px) scaleX(0.925);">InvoiceDate</span>
<div class="b" style="left:400.001px;top:203px;width:1px;height:13px;background:#dcdcdc;"></div>
<span class="t" style="left:405px;top:205px;font-size:8.2px;transform:translate(0.40px,0.00px) scaleX(0.912);">ProductTotal</span>
<div class="b" style="left:466.668px;top:203px;width:1px;height:13px;background:#dcdcdc;"></div>
<span class="t" style="left:472px;top:205px;font-size:8.2px;transform:translate(0.07px,0.00px) scaleX(0.891);">SalesTax</span>
<div class="b" style="left:533.335px;top:203px;width:1px;height:13px;background:#dcdcdc;"></div>
<span class="t" style="left:538px;top:205px;font-size:8.2px;transform:translate(0.74px,0.00px) scaleX(0.878);">Shipping</span>
<div class="b" style="left:600.002px;top:203px;width:1px;height:13px;background:#dcdcdc;"></div>
<span class="t" style="left:605px;top:205px;font-size:8.2px;transform:translate(0.40px,0.00px) scaleX(0.936);">InvoiceTotal</span>
<div class="b" style="left:666.7px;top:203px;width:1px;height:13px;background:#dcdcdc;"></div>
<svg class="b" style="left:168px;top:198px;" width="520" height="195" viewBox="0 0 520 195"><rect x="3.5" y="3.5" width="511" height="187" fill="none" stroke="#b0b0b0" stroke-width="0.9" stroke-dasharray="2 2"/><circle cx="3.5" cy="3.5" r="2" fill="#ffffff" stroke="#3c3c3c" stroke-width="0.9"/><circle cx="259" cy="3.5" r="2" fill="#ffffff" stroke="#3c3c3c" stroke-width="0.9"/><circle cx="3.5" cy="97" r="2" fill="#ffffff" stroke="#3c3c3c" stroke-width="0.9"/><circle cx="3.5" cy="190.5" r="2" fill="#ffffff" stroke="#3c3c3c" stroke-width="0.9"/><circle cx="259" cy="190.5" r="2" fill="#ffffff" stroke="#3c3c3c" stroke-width="0.9"/><circle cx="514.5" cy="190.5" r="2" fill="#ffffff" stroke="#3c3c3c" stroke-width="0.9"/></svg>
<svg class="b" style="left:673px;top:197.5px;" width="6" height="6.5" viewBox="0 0 6 6.5"><rect x="0.4" y="0.4" width="5.2" height="5.7" fill="#ffffff" stroke="#3c3c3c" stroke-width="0.8"/><path d="M4 1.5 L1.8 3.25 L4 5 Z" fill="#1e1e1e"/></svg>
<div class="b" style="left:679px;top:196.5px;width:186px;height:180.5px;border:1px solid #c3cad6;background:linear-gradient(90deg,#ffffff 0%,#f6f8fb 45%,#dfe5ef 100%);box-shadow:1px 1px 2px rgba(0,0,0,0.28);overflow:visible;"></div>
<div class="b" style="left:680px;top:197.5px;width:184px;height:13.5px;background:linear-gradient(180deg,#bccde2,#cad7e9);border-bottom:1px solid #b4c3d8;"></div>
<span class="t" style="left:684px;top:198px;font-weight:bold;transform:translate(0.00px,0.30px) scaleX(0.898);">DataGridView Tasks</span>
<span class="t" style="left:684px;top:215px;transform:translate(0.00px,0.10px) scaleX(0.888);">Choose Data Source:</span>
<div class="b" style="left:762.5px;top:214.3px;width:100px;height:13.3px;background:#ffffff;border:1px solid #c4c8cf;"></div>
<span class="t" style="left:766px;top:214px;transform:translate(0.00px,0.90px) scaleX(0.915);">InvoicesBindingSource</span>
<div class="b" style="left:852px;top:215.8px;width:9.5px;height:10.4px;background:#e3e3e3;border:1px solid #adadad;"></div>
<svg class="b" style="left:853.8px;top:219.5px;" width="6" height="4" viewBox="0 0 6 4"><path d="M0.5 0.5 L3 3 L5.5 0.5" stroke="#444" stroke-width="0.9" fill="none"/></svg>
<span class="t" style="left:684px;top:232px;color:#3068ad;transform:translate(0.00px,0.60px) scaleX(0.918);">Edit Columns...</span>
<span class="t" style="left:684px;top:247px;color:#3068ad;transform:translate(0.00px,0.00px) scaleX(0.945);">Add Column...</span>
<div class="b" style="left:682px;top:261px;width:181px;height:1px;background:#dce1ea;"></div>
<div class="b" style="left:682.2px;top:264.3px;width:8.7px;height:8.7px;background:#ffffff;border:1px solid #5a5a5a;"></div>
<span class="t" style="left:694px;top:263px;transform:translate(0.70px,0.10px) scaleX(0.938);">Enable Adding</span>
<div class="b" style="left:682.2px;top:281.7px;width:8.7px;height:8.7px;background:#ffffff;border:1px solid #5a5a5a;"></div>
<span class="t" style="left:694px;top:280px;transform:translate(0.70px,0.50px) scaleX(0.911);">Enable Editing</span>
<div class="b" style="left:682.2px;top:299px;width:8.7px;height:8.7px;background:#ffffff;border:1px solid #5a5a5a;"></div>
<span class="t" style="left:694px;top:297px;transform:translate(0.70px,0.80px) scaleX(0.906);">Enable Deleting</span>
<div class="b" style="left:682.2px;top:316.3px;width:8.7px;height:8.7px;background:#ffffff;border:1px solid #5a5a5a;"></div>
<span class="t" style="left:694px;top:315px;transform:translate(0.70px,0.10px) scaleX(0.916);">Enable Column Reordering</span>
<div class="b" style="left:682.2px;top:299px;width:8.7px;height:8.7px;background:#cfe6f8;border:1px solid #3a72b4;"></div>
<svg class="b" style="left:683px;top:299.9px;" width="8" height="7" viewBox="0 0 8 7"><path d="M1.2 3.4 L3 5.4 L6.6 1" stroke="#1f4f8f" stroke-width="1.2" fill="none"/></svg>
<div class="b" style="left:682px;top:330.5px;width:181px;height:1px;background:#dce1ea;"></div>
<span class="t" style="left:684px;top:332px;color:#3068ad;transform:translate(0.00px,0.60px) scaleX(0.917);">Dock in Parent Container</span>
<div class="b" style="left:682px;top:346px;width:181px;height:1px;background:#dce1ea;"></div>
<span class="t" style="left:684px;top:348px;color:#3068ad;transform:translate(0.00px,0.00px) scaleX(0.935);">Add Query...</span>
<span class="t" style="left:684px;top:362px;color:#3068ad;transform:translate(0.00px,0.60px) scaleX(0.892);">Preview Data...</span>
<svg class="b" style="left:685.5px;top:306.5px;" width="8" height="12" viewBox="0 0 8 12"><path d="M0.5 0.5 V9.6 L2.7 7.6 L4.3 11.2 L5.8 10.5 L4.2 7 L7.2 7 Z" fill="#ffffff" stroke="#1e1e1e" stroke-width="0.8"/></svg>
<svg class="b" style="left:157px;top:495.3px;" width="9.6" height="9.6" viewBox="0 0 9.6 9.6"><path d="M3.6 1.4 V5.6 C3.6 7 9.2 7 9.2 5.6 V1.4" fill="#5a5a5a"/><ellipse cx="6.4" cy="1.5" rx="2.8" ry="1.2" fill="#b9b9b9" stroke="#4a4a4a" stroke-width="0.5"/><path d="M0.3 4.2 V8 C0.3 9.6 5.7 9.6 5.7 8 V4.2" fill="#2e2e2e" stroke="#f7f7f6" stroke-width="0.5"/><ellipse cx="3" cy="4.2" rx="2.7" ry="1.2" fill="#8d8d8d" stroke="#2e2e2e" stroke-width="0.5"/></svg>
<span class="t" style="left:169px;top:495px;transform:translate(0.50px,0.70px) scaleX(0.907);">MMABooksDataSet</span>
<svg class="b" style="left:261.7px;top:495.2px;" width="9.6" height="10" viewBox="0 0 9.6 10"><path d="M0.3 3.8 V8.4 C0.3 10 6.1 10 6.1 8.4 V3.8" fill="#2f8fd0"/><ellipse cx="3.2" cy="3.8" rx="2.9" ry="1.2" fill="#8ccbee" stroke="#2f8fd0" stroke-width="0.4"/><path d="M6.6 1.4 H8.6 V6.8 H7" stroke="#3c3c3c" stroke-width="0.9" fill="none"/><rect x="6.4" y="0" width="2.4" height="2.4" fill="#1e1e1e"/></svg>
<span class="t" style="left:274px;top:495px;transform:translate(0.00px,0.70px) scaleX(0.903);">CustomersBindingSource</span>
<svg class="b" style="left:387.5px;top:496.2px;" width="9" height="8" viewBox="0 0 9 8"><path d="M1.4 3.6 V2 C1.4 0.2 7.6 0.2 7.6 2 V3.6" stroke="#2e2e2e" stroke-width="1.2" fill="none"/><rect x="0.2" y="3.4" width="3.6" height="4.2" fill="#2e2e2e"/><rect x="5.2" y="3.4" width="3.6" height="4.2" fill="#2e2e2e"/><rect x="1.3" y="4.6" width="1.3" height="1.8" fill="#f7f7f6"/><rect x="6.3" y="4.6" width="1.3" height="1.8" fill="#f7f7f6"/><path d="M3.8 4.6 H5.2" stroke="#2e2e2e" stroke-width="0.8"/></svg>
<span class="t" style="left:399px;top:495px;transform:translate(0.00px,0.70px) scaleX(0.911);">CustomersTableAdapter</span>
<svg class="b" style="left:509.5px;top:496.2px;" width="9" height="8" viewBox="0 0 9 8"><path d="M1.4 3.6 V2 C1.4 0.2 7.6 0.2 7.6 2 V3.6" stroke="#2e2e2e" stroke-width="1.2" fill="none"/><rect x="0.2" y="3.4" width="3.6" height="4.2" fill="#2e2e2e"/><rect x="5.2" y="3.4" width="3.6" height="4.2" fill="#2e2e2e"/><rect x="1.3" y="4.6" width="1.3" height="1.8" fill="#f7f7f6"/><rect x="6.3" y="4.6" width="1.3" height="1.8" fill="#f7f7f6"/><path d="M3.8 4.6 H5.2" stroke="#2e2e2e" stroke-width="0.8"/></svg>
<span class="t" style="left:521px;top:495px;transform:translate(0.00px,0.70px) scaleX(0.928);">TableAdapterManager</span>
<svg class="b" style="left:760.7px;top:495.2px;" width="9.6" height="10" viewBox="0 0 9.6 10"><path d="M0.3 3.8 V8.4 C0.3 10 6.1 10 6.1 8.4 V3.8" fill="#2f8fd0"/><ellipse cx="3.2" cy="3.8" rx="2.9" ry="1.2" fill="#8ccbee" stroke="#2f8fd0" stroke-width="0.4"/><path d="M6.6 1.4 H8.6 V6.8 H7" stroke="#3c3c3c" stroke-width="0.9" fill="none"/><rect x="6.4" y="0" width="2.4" height="2.4" fill="#1e1e1e"/></svg>
<span class="t" style="left:773px;top:495px;transform:translate(0.50px,0.70px) scaleX(0.915);">InvoicesBindingSource</span>
<svg class="b" style="left:877.5px;top:496.2px;" width="9" height="8" viewBox="0 0 9 8"><path d="M1.4 3.6 V2 C1.4 0.2 7.6 0.2 7.6 2 V3.6" stroke="#2e2e2e" stroke-width="1.2" fill="none"/><rect x="0.2" y="3.4" width="3.6" height="4.2" fill="#2e2e2e"/><rect x="5.2" y="3.4" width="3.6" height="4.2" fill="#2e2e2e"/><rect x="1.3" y="4.6" width="1.3" height="1.8" fill="#f7f7f6"/><rect x="6.3" y="4.6" width="1.3" height="1.8" fill="#f7f7f6"/><path d="M3.8 4.6 H5.2" stroke="#2e2e2e" stroke-width="0.8"/></svg>
<span class="t" style="left:889px;top:495px;transform:translate(0.00px,0.70px) scaleX(0.925);">InvoicesTableAdapter</span>
<svg class="b" style="left:157px;top:522px;" width="9.4" height="7.2" viewBox="0 0 9.4 7.2"><rect x="0.5" y="0.5" width="8.4" height="6.2" fill="#f7f7f6" stroke="#2e2e2e" stroke-width="1"/><rect x="1" y="1" width="7.4" height="2" fill="#2e2e2e"/><path d="M1.8 5.6 V3.8 M3.4 5.6 V3.8 L4.6 5.2 L5.8 3.8 V5.6 M7.2 3.8 V5.6" stroke="#2e2e2e" stroke-width="0.7" fill="none"/></svg>
<span class="t" style="left:169px;top:521px;transform:translate(0.50px,0.60px) scaleX(0.902);">FillByCustomerIDToolStrip</span>
<div class="b" style="left:141px;top:540px;width:898px;height:13.7px;background:#40508d;"></div>
<span class="t" style="left:144px;top:541px;color:#ffffff;transform:translate(0.00px,0.30px) scaleX(0.889);">Error List</span>
<svg class="b" style="left:1006.5px;top:545px;" width="6" height="4" viewBox="0 0 6 4"><path d="M0 0 H6 L3 3.4 Z" fill="#c5cce3"/></svg>
<svg class="b" style="left:1017.5px;top:543px;" width="6" height="9" viewBox="0 0 6 9"><path d="M1.5 0.5 H4.5 V5 M1.5 0.5 V5 M0.3 5 H5.7 M3 5 V8.5" stroke="#c5cce3" stroke-width="1" fill="none"/></svg>
<svg class="b" style="left:1027.5px;top:543.5px;" width="7" height="7" viewBox="0 0 7 7"><path d="M0.5 0.5 L6.5 6.5 M6.5 0.5 L0.5 6.5" stroke="#c5cce3" stroke-width="1.1"/></svg>
<div class="b" style="left:141px;top:553.7px;width:898px;height:17.3px;background:#ccd5f0;"></div>
<div class="b" style="left:145.5px;top:555.3px;width:100.5px;height:14.7px;background:#e6ebfa;"></div>
<span class="t" style="left:148px;top:557px;transform:translate(0.50px,0.30px) scaleX(0.912);">Entire Solution</span>
<svg class="b" style="left:238.4px;top:561.6px;" width="4.2" height="2.4" viewBox="0 0 4.2 2.4"><path d="M0 0 H4.2 L2.1 2.4 Z" fill="#1e1e1e"/></svg>
<div class="b" style="left:248.5px;top:556px;width:1.5px;height:13px;background:#b9c3e0;"></div>
<div class="b" style="left:253.2px;top:555.7px;width:46.8px;height:14.3px;background:#fdf1d3;border:1px solid #f0c566;"></div>
<svg class="b" style="left:256.2px;top:558.3px;" width="9.2" height="9.2" viewBox="0 0 9.2 9.2"><circle cx="4.6" cy="4.6" r="4.6" fill="#c4281c"/><circle cx="4.6" cy="4.6" r="3.7" fill="none" stroke="#e8675c" stroke-width="0.5"/><path d="M2.7 2.7 L6.5 6.5 M6.5 2.7 L2.7 6.5" stroke="#fff" stroke-width="1.3"/></svg>
<span class="t" style="left:268px;top:557px;transform:translate(0.70px,0.30px) scaleX(0.851);">0 Errors</span>
<div class="b" style="left:302px;top:556px;width:1.2px;height:13px;background:#b9c3e0;"></div>
<div class="b" style="left:305.3px;top:555.7px;width:59.7px;height:14.3px;background:#fdf1d3;border:1px solid #f0c566;"></div>
<svg class="b" style="left:308px;top:558.3px;" width="9.4" height="8.6" viewBox="0 0 9.4 8.6"><path d="M4.7 0 L9.4 8.6 H0 Z" fill="#f2c314" stroke="#d9a800" stroke-width="0.5"/><path d="M4.7 2.8 V5.8 M4.7 6.5 V7.6" stroke="#1e1e1e" stroke-width="1.1"/></svg>
<span class="t" style="left:320px;top:557px;transform:translate(0.70px,0.30px) scaleX(0.920);">0 Warnings</span>
<div class="b" style="left:367.5px;top:556px;width:1.2px;height:13px;background:#b9c3e0;"></div>
<svg class="b" style="left:373.3px;top:558.3px;" width="9.2" height="9.2" viewBox="0 0 9.2 9.2"><circle cx="4.6" cy="4.6" r="4.6" fill="#1a8ad4"/><circle cx="4.6" cy="4.6" r="3.7" fill="none" stroke="#7cc4ee" stroke-width="0.5"/><path d="M4.6 4 V7.2" stroke="#fff" stroke-width="1.4"/><circle cx="4.6" cy="2.4" r="0.85" fill="#fff"/></svg>
<span class="t" style="left:385px;top:557px;transform:translate(0.80px,0.30px) scaleX(0.857);">0 Messages</span>
<div class="b" style="left:433px;top:556px;width:1.2px;height:13px;background:#b9c3e0;"></div>
<div class="b" style="left:436.4px;top:555.7px;width:15.5px;height:14.3px;background:#fdf1d3;border:1px solid #f0c566;"></div>
<svg class="b" style="left:439px;top:558px;" width="10" height="9" viewBox="0 0 10 9"><path d="M3.5 3.5 H9.5 L7.3 6 V9 L5.7 8 V6 Z" fill="#3c3c3c"/><path d="M0.5 0.5 L4 4 M4 0.5 L0.5 4" stroke="#b42318" stroke-width="1.2"/></svg>
<div class="b" style="left:456.5px;top:555.3px;width:102px;height:14.7px;background:#e6ebfa;"></div>
<span class="t" style="left:461px;top:557px;transform:translate(0.70px,0.30px) scaleX(0.900);">Build + IntelliSense</span>
<svg class="b" style="left:551.4px;top:561.6px;" width="4.2" height="2.4" viewBox="0 0 4.2 2.4"><path d="M0 0 H4.2 L2.1 2.4 Z" fill="#1e1e1e"/></svg>
<div class="b" style="left:905.5px;top:555.5px;width:131.5px;height:14.5px;background:#ffffff;border:1px solid #dfe5f5;"></div>
<span class="t" style="left:908px;top:557px;color:#6d7284;transform:translate(0.50px,0.30px) scaleX(0.884);">Search Error List</span>
<svg class="b" style="left:1019.5px;top:558px;" width="9" height="9" viewBox="0 0 9 9"><circle cx="5.6" cy="3.4" r="2.4" fill="none" stroke="#3a3f55" stroke-width="1.2"/><path d="M3.9 5.1 L0.8 8.2" stroke="#3a3f55" stroke-width="1.5"/></svg>
<svg class="b" style="left:1031px;top:562px;" width="4" height="2.5" viewBox="0 0 4 2.5"><path d="M0 0 H4 L2 2.5 Z" fill="#3a3f55"/></svg>
<div class="b" style="left:141px;top:571px;width:898px;height:88.5px;background:#ffffff;"></div>
<div class="b" style="left:141px;top:571px;width:898px;height:13.5px;background:#f8f8f8;border-bottom:1px solid #e2e2e2;"></div>
<div class="b" style="left:159.5px;top:571px;width:1px;height:13px;background:#e0e0e0;"></div>
<div class="b" style="left:175.3px;top:571px;width:1px;height:13px;background:#e0e0e0;"></div>
<div class="b" style="left:209.3px;top:571px;width:1px;height:13px;background:#e0e0e0;"></div>
<div class="b" style="left:765px;top:571px;width:1px;height:13px;background:#e0e0e0;"></div>
<div class="b" style="left:865.2px;top:571px;width:1px;height:13px;background:#e0e0e0;"></div>
<div class="b" style="left:965.3px;top:571px;width:1px;height:13px;background:#e0e0e0;"></div>
<div class="b" style="left:988.2px;top:571px;width:1px;height:13px;background:#e0e0e0;"></div>
<div class="b" style="left:1022.2px;top:571px;width:1px;height:13px;background:#e0e0e0;"></div>
<svg class="b" style="left:169px;top:573.5px;" width="4" height="4" viewBox="0 0 4 4"><path d="M0 0 H4 V4 Z" fill="#6a6a6a"/></svg>
<span class="t" style="left:179px;top:573px;transform:translate(0.00px,0.10px) scaleX(0.925);">Code</span>
<span class="t" style="left:212px;top:573px;transform:translate(0.50px,0.10px) scaleX(0.930);">Description</span>
<span class="t" style="left:768px;top:573px;transform:translate(0.00px,0.10px) scaleX(0.935);">Project</span>
<span class="t" style="left:868px;top:573px;transform:translate(0.00px,0.10px) scaleX(0.866);">File</span>
<span class="t" style="left:968px;top:573px;transform:translate(0.00px,0.10px) scaleX(0.892);">Line</span>
<span class="t" style="left:991px;top:573px;transform:translate(0.00px,0.10px) scaleX(0.881);">Supp...</span>
<div class="b" style="left:141px;top:659.5px;width:38px;height:13.5px;background:#ffffff;"></div>
<span class="t" style="left:145px;top:660px;transform:translate(0.00px,0.80px) scaleX(0.889);">Error List</span>
<div class="b" style="left:179.5px;top:659.5px;width:48.5px;height:13.5px;background:#40508d;"></div>
<span class="t" style="left:183px;top:660px;color:#ffffff;transform:translate(0.50px,0.80px) scaleX(0.903);">Breakpoints</span>
<div class="b" style="left:229px;top:659.5px;width:77.5px;height:13.5px;background:#40508d;"></div>
<span class="t" style="left:233px;top:660px;color:#ffffff;transform:translate(0.00px,0.80px) scaleX(0.951);">Immediate Window</span>
<div class="b" style="left:307.5px;top:659.5px;width:31px;height:13.5px;background:#40508d;"></div>
<span class="t" style="left:311px;top:660px;color:#ffffff;transform:translate(0.50px,0.80px) scaleX(0.910);">Output</span>
<div class="b" style="left:339.5px;top:659.5px;width:57.5px;height:13.5px;background:#40508d;"></div>
<span class="t" style="left:343px;top:660px;color:#ffffff;transform:translate(0.50px,0.80px) scaleX(0.908);">Call Hierarchy</span>
<div class="b" style="left:1044px;top:49px;width:215px;height:13.5px;background:#40508d;"></div>
<span class="t" style="left:1046px;top:50px;color:#ffffff;transform:translate(0.70px,0.10px) scaleX(0.901);">Properties</span>
<svg class="b" style="left:1228px;top:54px;" width="6" height="4" viewBox="0 0 6 4"><path d="M0 0 H6 L3 3.4 Z" fill="#c5cce3"/></svg>
<svg class="b" style="left:1239px;top:52px;" width="6" height="9" viewBox="0 0 6 9"><path d="M1.5 0.5 H4.5 V5 M1.5 0.5 V5 M0.3 5 H5.7 M3 5 V8.5" stroke="#c5cce3" stroke-width="1" fill="none"/></svg>
<svg class="b" style="left:1249px;top:52.5px;" width="7" height="7" viewBox="0 0 7 7"><path d="M0.5 0.5 L6.5 6.5 M6.5 0.5 L0.5 6.5" stroke="#c5cce3" stroke-width="1.1"/></svg>
<div class="b" style="left:1044px;top:62.3px;width:215px;height:16.4px;background:#ffffff;"></div>
<span class="t" style="left:1048px;top:65px;font-weight:bold;transform:translate(0.30px,0.00px) scaleX(0.910);">InvoicesDataGridView</span>
<span class="t" style="left:1135px;top:65px;transform:translate(0.00px,0.00px) scaleX(0.884);">System.Windows.Forms.DataGric</span>
<svg class="b" style="left:1252px;top:69.8px;" width="4" height="2.5" viewBox="0 0 4 2.5"><path d="M0 0 H4 L2 2.5 Z" fill="#1e1e1e"/></svg>
<div class="b" style="left:1044px;top:78.7px;width:215px;height:17.5px;background:#ccd5f0;"></div>
<svg class="b" style="left:1048.8px;top:83px;" width="9.4" height="9" viewBox="0 0 9.4 9"><rect x="0.4" y="0.4" width="3" height="3" fill="#fff" stroke="#1e1e1e" stroke-width="0.8"/><rect x="0.4" y="5.4" width="3" height="3" fill="#fff" stroke="#1e1e1e" stroke-width="0.8"/><path d="M1.1 1.9 H2.7 M1.9 1.1 V2.7 M1.1 6.9 H2.7 M1.9 6.1 V7.7" stroke="#1e1e1e" stroke-width="0.6"/><path d="M4.8 0.8 H8 M4.8 2.6 H9.2 M4.8 5.8 H8 M4.8 7.6 H9.2" stroke="#6a6a6a" stroke-width="1" stroke-dasharray="1.4 0.5"/></svg>
<div class="b" style="left:1061.3px;top:80.4px;width:15.4px;height:13.8px;background:#fdf1d3;border:1px solid #f5cc84;"></div>
<svg class="b" style="left:1064px;top:82.5px;" width="10" height="10" viewBox="0 0 10 10"><text x="0" y="4.6" font-size="5" font-weight="bold" font-family="Liberation Sans, sans-serif" fill="#1e1e1e">A</text><text x="0" y="9.8" font-size="5" font-weight="bold" font-family="Liberation Sans, sans-serif" fill="#1e1e1e">Z</text><path d="M6.9 1.5 V7.6" stroke="#1a5fb4" stroke-width="1.3" fill="none"/><path d="M4.7 5.8 L6.9 8.8 L9.1 5.8 Z" fill="#1a5fb4"/></svg>
<div class="b" style="left:1080.2px;top:80.4px;width:15.4px;height:13.8px;background:#fdf1d3;border:1px solid #f5cc84;"></div>
<svg class="b" style="left:1083px;top:82.5px;" width="10" height="10" viewBox="0 0 10 10"><path d="M2.5 2 H8 V9.5 H2.5 Z" fill="#fff" stroke="#3c3c3c" stroke-width="0.9"/><path d="M1 0.5 H6.5 V2" fill="none" stroke="#3c3c3c" stroke-width="0.9"/><path d="M1 0.5 V8 H2.5" fill="none" stroke="#3c3c3c" stroke-width="0.9"/><path d="M4 4.5 H6.8 M4 6.5 H6.8" stroke="#3c3c3c" stroke-width="0.8"/></svg>
<svg class="b" style="left:1100px;top:81.5px;" width="7" height="11" viewBox="0 0 7 11"><path d="M4.4 0 L0.8 5.8 H3.2 L2 11 L6.4 4.4 H3.8 L5.8 0 Z" fill="#d99a1f"/></svg>
<div class="b" style="left:1113px;top:81px;width:1px;height:13px;background:#a9b3d3;"></div>
<svg class="b" style="left:1118px;top:82.5px;" width="10" height="10" viewBox="0 0 10 10"><path d="M1 9 L5.4 4.6" stroke="#8d93a6" stroke-width="1.8"/><path d="M5 2.4 A2.6 2.6 0 0 1 8.6 0.6 L6.8 2.4 L7.6 3.4 L9.4 1.6 A2.6 2.6 0 0 1 6 5 Z" fill="#8d93a6"/></svg>
<div class="b" style="left:1044px;top:96px;width:215px;height:467.5px;background:#ffffff;"></div>
<div class="b" style="left:1044px;top:96px;width:10px;height:467.5px;background:#f2f3f7;"></div>
<div class="b" style="left:1054px;top:96px;width:94px;height:13.8px;background:#eeeeee;"></div>
<div class="b" style="left:1148px;top:96px;width:1px;height:467.5px;background:#eeeeee;"></div>
<div class="b" style="left:1248.5px;top:96px;width:10.5px;height:467.5px;background:#f0f2f9;"></div>
<svg class="b" style="left:1250.5px;top:101px;" width="6" height="4" viewBox="0 0 6 4"><path d="M0 4 L3 0 L6 4 Z" fill="#8f939e"/></svg>
<svg class="b" style="left:1250.5px;top:554px;" width="6" height="4" viewBox="0 0 6 4"><path d="M0 0 L3 4 L6 0 Z" fill="#8f939e"/></svg>
<div class="b" style="left:1250.3px;top:109.5px;width:5.8px;height:229.5px;background:#c9cbd4;"></div>
<div class="b" style="left:1056px;top:97px;width:91.5px;height:13px;"><span class="t" style="left:0;top:0;transform:translate(0.80px,0.80px) scaleX(0.931);">(ApplicationSettings)</span></div>
<div class="b" style="left:1056px;top:110px;width:91.5px;height:13px;"><span class="t" style="left:0;top:0;transform:translate(0.80px,0.47px) scaleX(0.906);">(DataBindings)</span></div>
<div class="b" style="left:1056px;top:123px;width:91.5px;height:13px;"><span class="t" style="left:0;top:0;transform:translate(0.80px,0.13px) scaleX(0.920);">(Name)</span></div>
<div class="b" style="left:1150px;top:123px;width:97px;height:13px;"><span class="t" style="left:0;top:0;font-weight:bold;transform:translate(0.80px,0.13px) scaleX(0.920);">InvoicesDataGridView</span></div>
<div class="b" style="left:1056px;top:135px;width:91.5px;height:13px;"><span class="t" style="left:0;top:0;transform:translate(0.80px,0.80px) scaleX(0.911);">AccessibleDescription</span></div>
<div class="b" style="left:1056px;top:148px;width:91.5px;height:13px;"><span class="t" style="left:0;top:0;transform:translate(0.80px,0.47px) scaleX(0.920);">AccessibleName</span></div>
<div class="b" style="left:1056px;top:161px;width:91.5px;height:13px;"><span class="t" style="left:0;top:0;transform:translate(0.80px,0.14px) scaleX(0.887);">AccessibleRole</span></div>
<div class="b" style="left:1150px;top:161px;width:97px;height:13px;"><span class="t" style="left:0;top:0;transform:translate(0.80px,0.14px) scaleX(0.920);">Default</span></div>
<div class="b" style="left:1056px;top:173px;width:91.5px;height:13px;"><span class="t" style="left:0;top:0;transform:translate(0.80px,0.80px) scaleX(0.945);">AllowDrop</span></div>
<div class="b" style="left:1150px;top:173px;width:97px;height:13px;"><span class="t" style="left:0;top:0;transform:translate(0.80px,0.80px) scaleX(0.920);">False</span></div>
<div class="b" style="left:1056px;top:186px;width:91.5px;height:13px;"><span class="t" style="left:0;top:0;transform:translate(0.80px,0.47px) scaleX(0.906);">AllowUserToAddRows</span></div>
<div class="b" style="left:1150px;top:186px;width:97px;height:13px;"><span class="t" style="left:0;top:0;font-weight:bold;transform:translate(0.80px,0.47px) scaleX(0.920);">False</span></div>
<div class="b" style="left:1056px;top:199px;width:91.5px;height:13px;"><span class="t" style="left:0;top:0;transform:translate(0.80px,0.14px) scaleX(0.888);">AllowUserToDeleteRows</span></div>
<div class="b" style="left:1150px;top:199px;width:97px;height:13px;"><span class="t" style="left:0;top:0;transform:translate(0.80px,0.14px) scaleX(0.920);">True</span></div>
<div class="b" style="left:1056px;top:211px;width:91.5px;height:13px;"><span class="t" style="left:0;top:0;transform:translate(0.80px,0.80px) scaleX(0.887);">AllowUserToOrderColumr</span></div>
<div class="b" style="left:1150px;top:211px;width:97px;height:13px;"><span class="t" style="left:0;top:0;transform:translate(0.80px,0.80px) scaleX(0.920);">False</span></div>
<div class="b" style="left:1056px;top:224px;width:91.5px;height:13px;"><span class="t" style="left:0;top:0;transform:translate(0.80px,0.47px) scaleX(0.887);">AllowUserToResizeColumr</span></div>
<div class="b" style="left:1150px;top:224px;width:97px;height:13px;"><span class="t" style="left:0;top:0;transform:translate(0.80px,0.47px) scaleX(0.920);">True</span></div>
<div class="b" style="left:1056px;top:237px;width:91.5px;height:13px;"><span class="t" style="left:0;top:0;transform:translate(0.80px,0.14px) scaleX(0.871);">AllowUserToResizeRows</span></div>
<div class="b" style="left:1150px;top:237px;width:97px;height:13px;"><span class="t" style="left:0;top:0;transform:translate(0.80px,0.14px) scaleX(0.920);">True</span></div>
<div class="b" style="left:1056px;top:249px;width:91.5px;height:13px;"><span class="t" style="left:0;top:0;transform:translate(0.80px,0.80px) scaleX(0.887);">AlternatingRowsDefaultCε</span></div>
<div class="b" style="left:1150px;top:249px;width:97px;height:13px;"><span class="t" style="left:0;top:0;transform:translate(0.80px,0.80px) scaleX(0.891);">DataGridViewCellStyle { }</span></div>
<div class="b" style="left:1056px;top:262px;width:91.5px;height:13px;"><span class="t" style="left:0;top:0;transform:translate(0.80px,0.47px) scaleX(0.920);">Anchor</span></div>
<div class="b" style="left:1150px;top:262px;width:97px;height:13px;"><span class="t" style="left:0;top:0;transform:translate(0.80px,0.47px) scaleX(0.920);">Top, Left</span></div>
<div class="b" style="left:1056px;top:275px;width:91.5px;height:13px;"><span class="t" style="left:0;top:0;transform:translate(0.80px,0.14px) scaleX(0.931);">AutoSizeColumnsMode</span></div>
<div class="b" style="left:1150px;top:275px;width:97px;height:13px;"><span class="t" style="left:0;top:0;transform:translate(0.80px,0.14px) scaleX(0.920);">None</span></div>
<div class="b" style="left:1056px;top:287px;width:91.5px;height:13px;"><span class="t" style="left:0;top:0;transform:translate(0.80px,0.81px) scaleX(0.899);">AutoSizeRowsMode</span></div>
<div class="b" style="left:1150px;top:287px;width:97px;height:13px;"><span class="t" style="left:0;top:0;transform:translate(0.80px,0.81px) scaleX(0.920);">None</span></div>
<div class="b" style="left:1056px;top:300px;width:91.5px;height:13px;"><span class="t" style="left:0;top:0;transform:translate(0.80px,0.47px) scaleX(0.920);">BackgroundColor</span></div>
<div class="b" style="left:1150.5px;top:301.972px;width:13px;height:8.6px;background:#ababab;border:1px solid #3c3c3c;"></div>
<div class="b" style="left:1168px;top:300px;width:79px;height:13px;"><span class="t" style="left:0;top:0;transform:translate(0.00px,0.47px) scaleX(0.920);">AppWorkspace</span></div>
<div class="b" style="left:1056px;top:313px;width:91.5px;height:13px;"><span class="t" style="left:0;top:0;transform:translate(0.80px,0.14px) scaleX(0.920);">BorderStyle</span></div>
<div class="b" style="left:1150px;top:313px;width:97px;height:13px;"><span class="t" style="left:0;top:0;transform:translate(0.80px,0.14px) scaleX(0.920);">FixedSingle</span></div>
<div class="b" style="left:1056px;top:325px;width:91.5px;height:13px;"><span class="t" style="left:0;top:0;transform:translate(0.80px,0.81px) scaleX(0.892);">CausesValidation</span></div>
<div class="b" style="left:1150px;top:325px;width:97px;height:13px;"><span class="t" style="left:0;top:0;transform:translate(0.80px,0.81px) scaleX(0.920);">True</span></div>
<div class="b" style="left:1056px;top:338px;width:91.5px;height:13px;"><span class="t" style="left:0;top:0;transform:translate(0.80px,0.47px) scaleX(0.893);">CellBorderStyle</span></div>
<div class="b" style="left:1150px;top:338px;width:97px;height:13px;"><span class="t" style="left:0;top:0;transform:translate(0.80px,0.47px) scaleX(0.920);">Single</span></div>
<div class="b" style="left:1056px;top:351px;width:91.5px;height:13px;"><span class="t" style="left:0;top:0;transform:translate(0.80px,0.14px) scaleX(0.938);">ClipboardCopyMode</span></div>
<div class="b" style="left:1150px;top:351px;width:97px;height:13px;"><span class="t" style="left:0;top:0;transform:translate(0.80px,0.14px) scaleX(0.885);">EnableWithAutoHeaderText</span></div>
<div class="b" style="left:1056px;top:363px;width:91.5px;height:13px;"><span class="t" style="left:0;top:0;transform:translate(0.80px,0.81px) scaleX(0.920);">ColumnHeadersBorderSty</span></div>
<div class="b" style="left:1150px;top:363px;width:97px;height:13px;"><span class="t" style="left:0;top:0;transform:translate(0.80px,0.81px) scaleX(0.920);">Raised</span></div>
<div class="b" style="left:1056px;top:376px;width:91.5px;height:13px;"><span class="t" style="left:0;top:0;transform:translate(0.80px,0.47px) scaleX(0.920);">ColumnHeadersDefaultCε</span></div>
<div class="b" style="left:1150px;top:376px;width:97px;height:13px;"><span class="t" style="left:0;top:0;transform:translate(0.80px,0.47px) scaleX(0.888);">DataGridViewCellStyle { Bac</span></div>
<div class="b" style="left:1056px;top:389px;width:91.5px;height:13px;"><span class="t" style="left:0;top:0;transform:translate(0.80px,0.14px) scaleX(0.920);">ColumnHeadersHeight</span></div>
<div class="b" style="left:1150px;top:389px;width:97px;height:13px;"><span class="t" style="left:0;top:0;transform:translate(0.80px,0.14px) scaleX(0.920);">21</span></div>
<div class="b" style="left:1056px;top:401px;width:91.5px;height:13px;"><span class="t" style="left:0;top:0;transform:translate(0.80px,0.81px) scaleX(0.920);">ColumnHeadersHeightSiz</span></div>
<div class="b" style="left:1150px;top:401px;width:97px;height:13px;"><span class="t" style="left:0;top:0;font-weight:bold;transform:translate(0.80px,0.81px) scaleX(0.920);">AutoSize</span></div>
<div class="b" style="left:1056px;top:414px;width:91.5px;height:13px;"><span class="t" style="left:0;top:0;transform:translate(0.80px,0.48px) scaleX(0.920);">ColumnHeadersVisible</span></div>
<div class="b" style="left:1150px;top:414px;width:97px;height:13px;"><span class="t" style="left:0;top:0;transform:translate(0.80px,0.48px) scaleX(0.920);">True</span></div>
<div class="b" style="left:1056px;top:427px;width:91.5px;height:13px;"><span class="t" style="left:0;top:0;transform:translate(0.80px,0.14px) scaleX(0.943);">Columns</span></div>
<div class="b" style="left:1150px;top:427px;width:97px;height:13px;"><span class="t" style="left:0;top:0;font-weight:bold;transform:translate(0.80px,0.14px) scaleX(0.880);">(Collection)</span></div>
<div class="b" style="left:1056px;top:439px;width:91.5px;height:13px;"><span class="t" style="left:0;top:0;transform:translate(0.80px,0.81px) scaleX(0.920);">ContextMenuStrip</span></div>
<div class="b" style="left:1150px;top:439px;width:97px;height:13px;"><span class="t" style="left:0;top:0;transform:translate(0.80px,0.81px) scaleX(0.920);">(none)</span></div>
<div class="b" style="left:1056px;top:452px;width:91.5px;height:13px;"><span class="t" style="left:0;top:0;transform:translate(0.80px,0.48px) scaleX(0.920);">Cursor</span></div>
<div class="b" style="left:1150px;top:452px;width:97px;height:13px;"><span class="t" style="left:0;top:0;transform:translate(0.80px,0.48px) scaleX(0.920);">Default</span></div>
<div class="b" style="left:1056px;top:465px;width:91.5px;height:13px;"><span class="t" style="left:0;top:0;transform:translate(0.80px,0.14px) scaleX(0.920);">DataMember</span></div>
<div class="b" style="left:1056px;top:477px;width:91.5px;height:13px;"><span class="t" style="left:0;top:0;transform:translate(0.80px,0.81px) scaleX(0.875);">DataSource</span></div>
<div class="b" style="left:1150px;top:477px;width:97px;height:13px;"><span class="t" style="left:0;top:0;font-weight:bold;transform:translate(0.80px,0.81px) scaleX(0.884);">InvoicesBindingSource</span></div>
<div class="b" style="left:1056px;top:490px;width:91.5px;height:13px;"><span class="t" style="left:0;top:0;transform:translate(0.80px,0.48px) scaleX(0.920);">DefaultCellStyle</span></div>
<div class="b" style="left:1150px;top:490px;width:97px;height:13px;"><span class="t" style="left:0;top:0;transform:translate(0.80px,0.48px) scaleX(0.888);">DataGridViewCellStyle { Bac</span></div>
<div class="b" style="left:1056px;top:503px;width:91.5px;height:13px;"><span class="t" style="left:0;top:0;transform:translate(0.80px,0.14px) scaleX(0.920);">Dock</span></div>
<div class="b" style="left:1150px;top:503px;width:97px;height:13px;"><span class="t" style="left:0;top:0;transform:translate(0.80px,0.14px) scaleX(0.920);">None</span></div>
<div class="b" style="left:1056px;top:515px;width:91.5px;height:13px;"><span class="t" style="left:0;top:0;transform:translate(0.80px,0.81px) scaleX(0.920);">EditMode</span></div>
<div class="b" style="left:1150px;top:515px;width:97px;height:13px;"><span class="t" style="left:0;top:0;transform:translate(0.80px,0.81px) scaleX(0.884);">EditOnKeystrokeOrF2</span></div>
<div class="b" style="left:1056px;top:528px;width:91.5px;height:13px;"><span class="t" style="left:0;top:0;transform:translate(0.80px,0.48px) scaleX(0.920);">Enabled</span></div>
<div class="b" style="left:1150px;top:528px;width:97px;height:13px;"><span class="t" style="left:0;top:0;transform:translate(0.80px,0.48px) scaleX(0.920);">True</span></div>
<div class="b" style="left:1056px;top:541px;width:91.5px;height:13px;"><span class="t" style="left:0;top:0;transform:translate(0.80px,0.14px) scaleX(0.887);">EnableHeadersVisualStyle:</span></div>
<div class="b" style="left:1150px;top:541px;width:97px;height:13px;"><span class="t" style="left:0;top:0;transform:translate(0.80px,0.14px) scaleX(0.920);">True</span></div>
<div class="b" style="left:1056px;top:553px;width:91.5px;height:13px;"><span class="t" style="left:0;top:0;transform:translate(0.80px,0.81px) scaleX(0.906);">GenerateMember</span></div>
<div class="b" style="left:1150px;top:553px;width:97px;height:13px;"><span class="t" style="left:0;top:0;transform:translate(0.80px,0.81px) scaleX(0.920);">True</span></div>
<svg class="b" style="left:1046px;top:100.4px;" width="6" height="6" viewBox="0 0 6 6"><rect x="0.35" y="0.35" width="5.3" height="5.3" fill="#fff" stroke="#4a4e5e" stroke-width="0.7"/><path d="M1.4 3 H4.6 M3 1.4 V4.6" stroke="#1e1e1e" stroke-width="0.65"/></svg>
<svg class="b" style="left:1046px;top:113.1px;" width="6" height="6" viewBox="0 0 6 6"><rect x="0.35" y="0.35" width="5.3" height="5.3" fill="#fff" stroke="#4a4e5e" stroke-width="0.7"/><path d="M1.4 3 H4.6 M3 1.4 V4.6" stroke="#1e1e1e" stroke-width="0.65"/></svg>
<div class="b" style="left:1044px;top:563.5px;width:215px;height:96px;background:#f7f9fe;"></div>
<span class="t" style="left:1047px;top:568px;color:#3b73c0;transform:translate(0.80px,0.60px) scaleX(0.901);text-decoration:underline;">Edit Columns...</span>
<span class="t" style="left:1104px;top:568px;color:#3b73c0;transform:translate(0.00px,0.60px) scaleX(0.909);text-decoration:underline;">Add Column...</span>
<span class="t" style="left:1048px;top:622px;font-weight:bold;transform:translate(0.20px,0.10px) scaleX(0.891);">(ApplicationSettings)</span>
<span class="t" style="left:1048px;top:634px;transform:translate(0.20px,0.30px) scaleX(0.941);">Maps property settings to an application configuration</span>
<span class="t" style="left:1048px;top:644px;transform:translate(0.20px,0.30px) scaleX(0.920);">file.</span>
<div class="b" style="left:1044px;top:659.5px;width:67.5px;height:13.5px;background:#40508d;"></div>
<span class="t" style="left:1047px;top:660px;color:#ffffff;transform:translate(0.50px,0.80px) scaleX(0.917);">Solution Explorer</span>
<div class="b" style="left:1112px;top:659.5px;width:42px;height:13.5px;background:#f7f9fe;"></div>
<span class="t" style="left:1115px;top:660px;transform:translate(0.50px,0.80px) scaleX(0.893);">Properties</span>
<div class="b" style="left:1276px;top:48.5px;width:4px;height:44px;background:#4a5a93;"></div>
<span class="t" style="left:1263.6px;top:48.6px;color:#fff;transform-origin:0 0;transform:rotate(90deg) translate(0,-12px) scaleX(0.965);">Notifications</span>
<div class="b" style="left:0px;top:677.8px;width:1280px;height:15.4px;background:#40508d;"></div>
<svg class="b" style="left:3px;top:682px;" width="10" height="8" viewBox="0 0 10 8"><path d="M2.4 0.6 H9.4 L7.6 7.4 H0.6 Z" fill="none" stroke="#fff" stroke-width="1"/></svg>
<span class="t" style="left:18px;top:680px;color:#ffffff;transform:translate(0.50px,0.30px) scaleX(0.845);">Ready</span>
<svg class="b" style="left:767.5px;top:681.5px;" width="8" height="8" viewBox="0 0 8 8"><path d="M1.5 0 V1.5 M0 1.5 H1.5" stroke="#fff" stroke-width="0.8"/><rect x="2" y="2" width="5.5" height="5.5" fill="none" stroke="#c8cfe6" stroke-width="0.8" stroke-dasharray="1 0.6"/></svg>
<span class="t" style="left:779px;top:680px;color:#ffffff;transform:translate(0.00px,0.30px) scaleX(0.853);">24 , 164</span>
<svg class="b" style="left:873.5px;top:681.5px;" width="9" height="8" viewBox="0 0 9 8"><rect x="0.5" y="3" width="5.5" height="4.5" fill="none" stroke="#c8cfe6" stroke-width="0.8" stroke-dasharray="1 0.6"/><path d="M2 1 H8 M8 1 V6 M7 0 V2 M7 5 H9" stroke="#fff" stroke-width="0.8"/></svg>
<span class="t" style="left:886px;top:680px;color:#ffffff;transform:translate(0.00px,0.30px) scaleX(0.848);">764 x 278</span>
<svg class="b" style="left:1140px;top:682px;" width="7" height="8" viewBox="0 0 7 8"><path d="M3.5 8 V1 M0.8 3.6 L3.5 0.8 L6.2 3.6" stroke="#fff" stroke-width="1.2" fill="none"/></svg>
<span class="t" style="left:1152px;top:680px;color:#ffffff;transform:translate(0.70px,0.30px) scaleX(0.928);">Add to Source Control</span>
<svg class="b" style="left:1235.5px;top:684.5px;" width="5" height="3.5" viewBox="0 0 5 3.5"><path d="M0 3.5 L2.5 0 L5 3.5 Z" fill="#fff"/></svg>
<svg class="b" style="left:1254px;top:680.5px;" width="12" height="11" viewBox="0 0 12 11"><path d="M1 7.2 C2.6 6.4 1.6 1 5 1 C8.4 1 7.4 6.4 9 7.2 Z" fill="#c5cce3"/><circle cx="5" cy="8.2" r="1" fill="#c5cce3"/><circle cx="9.7" cy="7.2" r="3.3" fill="#e0231c"/><text x="9.7" y="9" font-size="5.2" font-family="Liberation Sans, sans-serif" fill="#fff" text-anchor="middle">1</text></svg>
<div class="b" style="left:0px;top:693.2px;width:1280px;height:26.8px;background:#0f1822;"></div>
<svg class="b" style="left:11px;top:701.5px;" width="10" height="10" viewBox="0 0 10 10"><path d="M0 1.4 L4.2 0.8 V4.7 H0 Z M4.9 0.7 L10 0 V4.7 H4.9 Z M0 5.4 H4.2 V9.3 L0 8.7 Z M4.9 5.4 H10 V10 L4.9 9.3 Z" fill="#fff"/></svg>
<svg class="b" style="left:42px;top:702px;" width="12" height="9" viewBox="0 0 12 9"><rect x="2" y="1.5" width="6.5" height="6" fill="none" stroke="#fff" stroke-width="1"/><path d="M0.5 0 V9 M10.5 1.5 V3.5 M10.5 5.5 V7.5" stroke="#fff" stroke-width="1"/></svg>
<svg class="b" style="left:74px;top:698.5px;" width="16" height="16" viewBox="0 0 16 16"><circle cx="8" cy="8" r="7.6" fill="#e8e8e8"/><path d="M8 8 L1.4 4.2 A7.6 7.6 0 0 1 14.6 4.2 Z" fill="#db4437"/><path d="M8 8 L14.6 4.2 A7.6 7.6 0 0 1 8 15.6 Z" fill="#f4b400"/><path d="M8 8 L8 15.6 A7.6 7.6 0 0 1 1.4 4.2 Z" fill="#0f9d58"/><circle cx="8" cy="8" r="3.6" fill="#fff"/><circle cx="8" cy="8" r="2.8" fill="#4285f4"/></svg>
<div class="b" style="left:68.5px;top:718.5px;width:27.2px;height:1.5px;background:#8fcdf3;"></div>
<svg class="b" style="left:107px;top:698.5px;" width="16" height="16" viewBox="0 0 16 16"><rect x="7" y="1" width="8" height="6" fill="#2b5fc4" stroke="#dfe7f5" stroke-width="0.9"/><rect x="1" y="7" width="8" height="6" fill="#3f7fe0" stroke="#dfe7f5" stroke-width="0.9"/><path d="M3 15 H7 M11 9 V11 H9" stroke="#dfe7f5" stroke-width="1"/><path d="M9.5 2.5 L12.5 5.5" stroke="#f2c314" stroke-width="1.2"/></svg>
<svg class="b" style="left:139px;top:699.5px;" width="16" height="14" viewBox="0 0 16 14"><path d="M0.5 2 H6 L7.5 3.5 H15.5 V13 H0.5 Z" fill="#e8b730"/><rect x="0.5" y="5" width="15" height="8" fill="#f7d564"/><rect x="4" y="9" width="8" height="4" fill="#5aa7e0"/></svg>
<svg class="b" style="left:172.2px;top:698.5px;" width="16" height="16" viewBox="0 0 16 16"><rect x="0" y="0" width="16" height="16" fill="#424242"/><path d="M4.2 5.4 L11.6 3 V6 L4.2 8.4 Z" fill="#ff9800"/><path d="M4.2 5.4 L11.6 8.2 V11 L4.2 8.4 Z" fill="#ffa726"/><path d="M11.6 8.2 L4.2 10.4 V13.2 L11.6 11 Z" fill="#f57c00"/></svg>
<div class="b" style="left:166.4px;top:718.5px;width:28.6px;height:1.5px;background:#8fcdf3;"></div>
<div class="b" style="left:197px;top:693.2px;width:32px;height:26.8px;background:#393f47;"></div>
<svg class="b" style="left:204px;top:698.5px;" width="16" height="16" viewBox="0 0 16 16"><path d="M0.6 5 L2.4 4 L6.8 7.9 L11.6 1 L15.4 2.7 V13.3 L11.6 15 L6.8 8.1 L2.4 12 L0.6 11 Z M11.6 5.2 L8.2 8 L11.6 10.8 Z M1.9 6.3 V9.7 L3.8 8 Z" fill="#a57be8" fill-rule="evenodd"/></svg>
<div class="b" style="left:197px;top:718.5px;width:32px;height:1.5px;background:#8fcdf3;"></div>
<svg class="b" style="left:1120.5px;top:696px;" width="22" height="22" viewBox="0 0 22 22"><circle cx="11" cy="10.8" r="9.9" fill="#1e9a5a" stroke="#e8f5ee" stroke-width="1"/><path d="M3 11.6 H7 L8.4 8.4 L10.2 15.6 L12 5.4 L13.8 13.6 L15 11.6 H19" stroke="#fff" stroke-width="1.3" fill="none"/></svg>
<svg class="b" style="left:1158px;top:704px;" width="8" height="5" viewBox="0 0 8 5"><path d="M0.6 4.4 L4 1 L7.4 4.4" stroke="#fff" stroke-width="1.1" fill="none"/></svg>
<svg class="b" style="left:1172.5px;top:701.5px;" width="11" height="11" viewBox="0 0 11 11"><circle cx="5.5" cy="5.5" r="5.2" fill="#1f3fd8"/><text x="5.5" y="8" font-size="7" font-style="italic" font-family="Liberation Sans, sans-serif" fill="#fff" text-anchor="middle">S</text></svg>
<svg class="b" style="left:1188px;top:702px;" width="12" height="10" viewBox="0 0 12 10"><path d="M0.5 3.4 H2.6 L5.2 0.8 V9.2 L2.6 6.6 H0.5 Z" fill="none" stroke="#fff" stroke-width="0.9"/><path d="M6.8 3.2 C7.8 4.2 7.8 5.8 6.8 6.8 M8.4 1.8 C10.2 3.6 10.2 6.4 8.4 8.2" stroke="#fff" stroke-width="0.9" fill="none"/></svg>
<span class="t" style="left:1209px;top:694px;color:#ffffff;transform:translate(0.50px,0.70px) scaleX(0.859);">1:48 PM</span>
<span class="t" style="left:1208px;top:706px;color:#ffffff;transform:translate(0.00px,0.30px) scaleX(0.912);">4/5/2020</span>
<svg class="b" style="left:1252px;top:701px;" width="12" height="11" viewBox="0 0 12 11"><path d="M0.4 0.4 H11.6 V8.2 H4 L1.6 10.6 V8.2 H0.4 Z" fill="#fff"/><path d="M2.4 2.8 H9.6 M2.4 4.6 H9.6 M2.4 6.4 H6.4" stroke="#0f1822" stroke-width="0.7"/></svg>
</body></html>
